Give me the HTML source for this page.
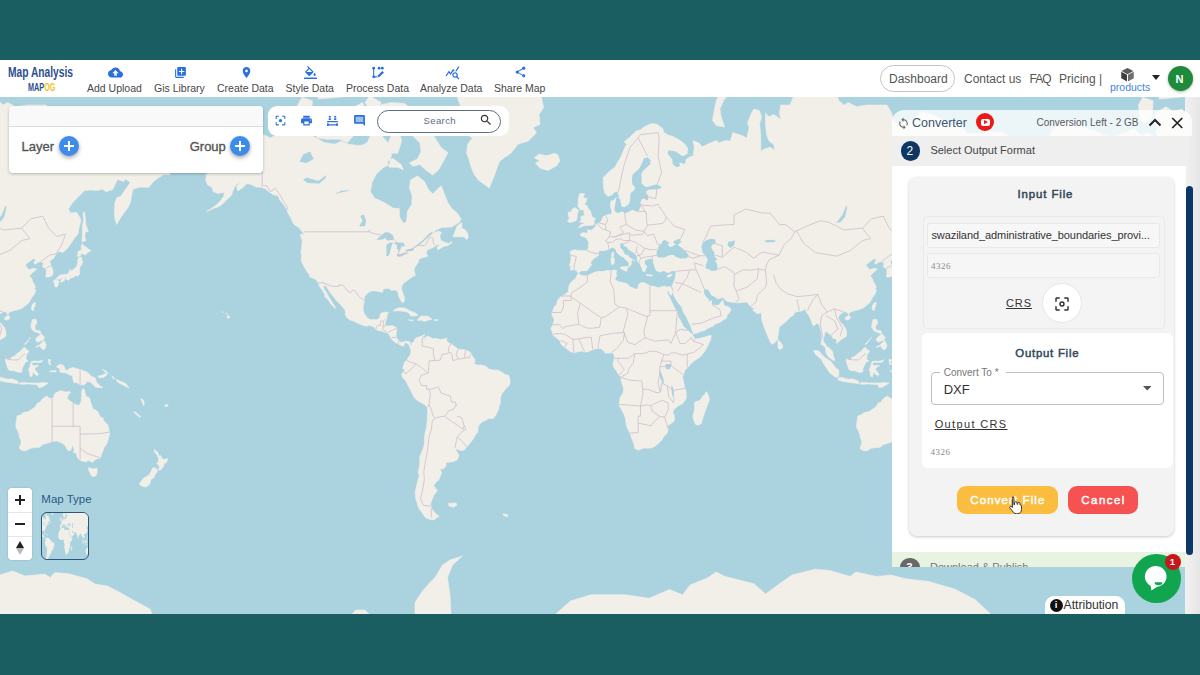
<!DOCTYPE html>
<html><head><meta charset="utf-8">
<style>
*{box-sizing:border-box;margin:0;padding:0}
html,body{width:1200px;height:675px;overflow:hidden;background:#1a5e62;font-family:"Liberation Sans",sans-serif}
.abs{position:absolute}
.t{position:absolute;white-space:nowrap;line-height:1}
#header{position:absolute;left:0;top:60px;width:1200px;height:37px;background:#fff}
.nav{color:#474747;font-size:10.5px}
.ico{position:absolute;fill:#2a6fdc}
#rstrip{position:absolute;left:1185px;top:97px;width:15px;height:517px;background:linear-gradient(90deg,#f1f1f1,#e6e6e6)}
#layer{position:absolute;left:9px;top:106px;width:254px;height:67px;background:#fff;border-radius:4px;box-shadow:0 1px 3px rgba(0,0,0,.25);overflow:hidden}
#layer .hd{position:absolute;left:0;top:0;width:254px;height:21px;background:#f9f9f9;border-bottom:1px solid #dcdcdc}
.plus{position:absolute;width:20px;height:20px;border-radius:50%;background:#3d8bea;box-shadow:0 2px 4px rgba(0,0,0,.35)}
.plus:before{content:"";position:absolute;left:5px;top:9px;width:10px;height:2px;background:#fff}
.plus:after{content:"";position:absolute;left:9px;top:5px;width:2px;height:10px;background:#fff}
#tools{position:absolute;left:268px;top:106px;width:241px;height:30px;background:#fff;border-radius:9px}
#search{position:absolute;left:377px;top:110px;width:124px;height:23px;border:1.3px solid #5b6f80;border-radius:12px;background:#fff}
#zoom{position:absolute;left:8px;top:488px;width:24px;height:72px;background:#fff;border-radius:4px;box-shadow:0 0 2px rgba(0,0,0,.2)}
#conv{position:absolute;left:892px;top:110px;width:300px;height:457px}
</style></head><body>
<svg width="1185" height="517" viewBox="0 97 1185 517" style="position:absolute;left:0;top:97px;display:block">
<rect x="0" y="97" width="1185" height="517" fill="#aad3df"/>
<path d="M199.2,158.5 203.8,154.5 213.2,155.6 213.7,150.9 209.0,148.5 202.0,142.4 207.4,137.9 212.0,129.8 220.2,124.9 225.3,122.0 235.4,124.9 241.2,127.7 250.6,129.8 262.2,133.9 270.4,137.9 276.2,135.2 283.2,133.2 289.1,130.5 293.8,129.1 300.8,135.2 306.6,132.6 315.9,137.9 324.1,142.4 334.6,144.2 341.6,141.1 348.6,144.2 358.0,145.5 362.6,144.9 367.3,142.4 370.8,134.6 372.0,120.6 375.5,113.0 379.0,131.2 383.7,137.9 388.3,143.0 391.8,133.9 400.0,133.9 401.6,141.1 397.7,153.3 391.8,153.3 389.5,164.6 383.7,167.3 376.7,173.5 372.0,182.4 370.4,191.8 375.0,198.5 380.2,200.6 386.0,203.6 393.0,208.1 399.3,208.6 399.5,216.9 403.5,223.4 406.5,221.5 407.5,211.0 411.7,204.8 412.2,196.3 409.4,188.1 410.5,180.0 417.5,176.1 424.5,181.5 428.5,189.5 432.7,194.0 438.5,188.1 441.3,185.8 444.4,194.0 447.9,202.7 451.4,208.1 457.9,213.8 461.2,219.6 458.4,223.0 451.4,227.1 442.0,227.4 436.2,230.0 429.2,235.3 425.7,239.1 432.7,233.5 438.5,231.1 441.6,232.5 439.7,236.0 440.9,240.5 445.5,242.5 449.0,243.5 451.4,241.5 451.9,242.8 447.9,245.5 443.2,246.8 437.8,250.0 436.9,247.1 440.9,244.5 436.2,245.1 433.9,247.1 430.4,248.7 427.3,250.0 426.2,253.2 428.0,255.8 426.9,256.7 423.8,257.3 419.9,258.6 418.7,259.8 418.5,262.2 416.4,264.9 415.2,266.7 414.0,270.3 415.0,273.5 415.2,275.5 412.9,276.6 409.8,278.6 407.0,280.8 403.5,283.3 401.9,285.8 401.4,289.1 403.3,294.2 404.7,298.4 404.2,301.5 402.8,302.8 401.6,301.8 400.0,298.9 398.4,295.8 398.1,292.6 395.8,290.2 394.2,289.9 391.8,290.7 389.5,288.8 386.0,288.3 383.0,289.4 382.5,292.3 380.2,292.1 377.8,291.2 372.5,290.7 369.7,291.8 366.1,294.4 364.3,297.1 364.5,300.7 363.3,305.6 363.1,310.2 364.5,313.7 367.1,317.7 370.1,319.4 373.2,319.7 377.8,319.4 379.7,317.5 380.4,313.7 382.5,312.5 388.3,312.0 387.2,315.0 386.5,319.4 385.3,321.9 384.8,325.5 387.2,326.0 393.0,325.8 397.0,328.0 396.3,332.8 396.0,336.4 397.0,338.7 400.5,342.3 403.5,342.1 405.8,341.1 408.9,341.6 410.8,343.0 412.2,343.2 414.0,341.3 415.2,338.7 416.8,337.6 419.9,336.8 422.9,335.4 425.0,334.2 423.8,336.8 424.5,339.2 425.7,340.4 425.0,337.6 428.0,336.1 429.2,336.6 432.2,338.5 436.2,338.5 440.9,339.5 445.5,338.5 447.2,338.3 446.2,339.9 449.0,343.2 451.4,343.9 453.7,345.8 456.1,347.5 458.4,349.4 463.1,349.6 465.9,350.1 470.1,352.2 471.7,354.1 472.4,356.4 474.7,359.2 475.0,362.2 473.6,363.6 478.2,365.3 480.6,364.8 486.4,366.4 488.7,369.0 493.4,369.9 498.1,370.2 501.6,372.0 505.1,374.6 508.6,375.3 509.8,378.6 510.2,382.1 509.3,385.2 506.5,388.1 504.4,390.4 501.6,394.0 500.4,397.6 500.4,402.5 499.3,406.1 498.1,410.6 495.8,415.1 493.4,418.4 488.7,418.6 485.2,420.6 482.2,421.9 479.4,424.5 478.0,427.6 478.0,432.1 475.4,435.0 473.1,439.1 470.1,442.9 466.8,447.1 464.2,450.2 460.7,450.5 457.2,449.3 454.9,448.8 457.7,453.0 459.1,455.4 457.2,459.8 453.7,461.6 447.9,462.5 446.0,461.9 446.0,466.1 443.2,469.2 439.7,468.5 442.0,472.9 440.9,474.2 439.0,479.7 436.2,482.0 433.6,485.7 437.4,490.8 433.9,495.0 432.0,499.7 430.4,504.2 431.8,507.2 431.5,508.7 433.9,511.8 439.2,516.6 436.2,517.8 434.3,519.9 430.4,519.5 425.7,517.8 422.2,513.0 418.7,508.0 415.7,498.6 415.2,491.5 416.4,486.3 418.0,479.7 419.2,475.8 418.2,471.7 419.4,467.0 419.9,461.0 419.6,457.1 421.7,452.2 423.4,447.9 424.3,444.6 424.5,437.7 425.0,432.9 426.2,428.9 426.9,423.7 427.3,418.6 427.6,412.3 427.3,407.4 424.5,404.4 419.9,402.0 415.9,399.6 413.3,395.9 411.2,391.6 408.2,385.7 405.8,381.0 402.6,377.4 401.6,374.2 404.0,371.3 404.7,369.2 402.6,368.5 403.5,365.3 404.7,362.0 407.0,360.4 408.2,357.6 410.5,354.5 411.0,350.5 409.8,346.5 408.4,344.2 405.8,342.5 404.2,343.9 403.7,346.3 401.2,345.4 398.8,344.2 396.3,343.2 393.0,340.4 391.1,338.7 389.5,335.2 387.2,332.8 384.8,332.3 381.3,331.1 377.8,330.4 375.5,328.9 373.2,326.8 369.7,325.3 366.1,326.3 361.5,324.8 358.0,323.3 354.5,321.6 349.8,319.9 346.8,317.5 345.1,314.7 345.6,312.0 344.7,309.2 343.0,307.7 340.5,304.4 338.1,302.3 336.0,300.5 334.6,297.9 332.5,295.5 330.0,292.6 328.1,289.1 326.4,286.4 323.4,285.0 323.9,288.6 326.4,292.6 328.6,296.6 331.1,300.5 333.0,303.6 334.2,305.4 335.8,307.4 334.9,308.4 333.9,306.9 331.1,304.4 329.5,301.8 327.6,299.2 324.6,296.6 324.8,294.4 322.5,290.4 319.9,287.2 319.0,284.7 317.8,282.5 316.4,280.0 314.8,278.9 312.4,277.8 309.9,277.2 309.2,274.6 306.8,271.4 305.4,268.8 304.3,267.0 302.4,263.4 301.2,260.4 301.5,255.8 300.8,252.6 301.7,247.1 302.2,241.5 300.3,234.2 304.3,234.2 300.8,230.0 298.4,227.1 294.9,225.2 292.6,222.6 291.4,218.8 287.9,213.0 286.7,209.0 283.7,204.8 279.7,199.7 277.9,195.4 273.9,194.9 270.4,193.1 265.7,189.0 261.1,187.2 256.4,187.2 251.7,184.8 247.1,183.4 242.4,188.1 237.7,190.9 236.5,186.3 241.2,181.5 235.4,185.3 233.0,190.4 231.4,195.4 227.2,199.3 223.0,203.6 219.0,206.5 214.4,208.1 209.7,210.2 206.7,211.4 212.0,208.1 216.7,204.8 220.7,200.6 223.7,196.3 224.2,192.7 221.4,192.7 217.9,193.6 213.2,191.8 212.0,187.2 207.4,184.8 205.7,180.0 206.2,175.0 208.5,171.5 215.5,169.9 216.0,165.1 212.0,164.6 206.2,164.6 202.7,162.9 199.2,158.5ZM1039.9,158.5 1044.5,154.5 1053.9,155.6 1054.3,150.9 1049.7,148.5 1042.7,142.4 1048.0,137.9 1052.7,129.8 1060.9,124.9 1066.0,122.0 1076.1,124.9 1081.9,127.7 1091.2,129.8 1102.9,133.9 1111.1,137.9 1116.9,135.2 1123.9,133.2 1129.8,130.5 1134.4,129.1 1141.5,135.2 1147.3,132.6 1156.6,137.9 1164.8,142.4 1175.3,144.2 1182.3,141.1 1189.3,144.2 1198.7,145.5 1203.3,144.9 1208.0,142.4 1211.5,134.6 1212.7,120.6 1216.2,113.0 1219.7,131.2 1224.4,137.9 1229.0,143.0 1232.5,133.9 1240.7,133.9 1242.3,141.1 1238.4,153.3 1232.5,153.3 1230.2,164.6 1224.4,167.3 1217.3,173.5 1212.7,182.4 1211.0,191.8 1215.7,198.5 1220.9,200.6 1226.7,203.6 1233.7,208.1 1240.0,208.6 1240.2,216.9 1244.2,223.4 1247.2,221.5 1248.2,211.0 1252.4,204.8 1252.8,196.3 1250.0,188.1 1251.2,180.0 1258.2,176.1 1265.2,181.5 1269.2,189.5 1273.4,194.0 1279.2,188.1 1282.0,185.8 1285.1,194.0 1288.6,202.7 1292.1,208.1 1298.6,213.8 1301.9,219.6 1299.1,223.0 1292.1,227.1 1282.7,227.4 1276.9,230.0 1269.9,235.3 1266.4,239.1 1273.4,233.5 1279.2,231.1 1282.3,232.5 1280.4,236.0 1281.6,240.5 1286.2,242.5 1289.7,243.5 1292.1,241.5 1292.5,242.8 1288.6,245.5 1283.9,246.8 1278.5,250.0 1277.6,247.1 1281.6,244.5 1276.9,245.1 1274.6,247.1 1271.1,248.7 1268.0,250.0 1266.9,253.2 1268.7,255.8 1267.6,256.7 1264.5,257.3 1260.5,258.6 1259.4,259.8 1259.1,262.2 1257.0,264.9 1255.9,266.7 1254.7,270.3 1255.6,273.5 1255.9,275.5 1253.5,276.6 1250.5,278.6 1247.7,280.8 1244.2,283.3 1242.6,285.8 1242.1,289.1 1244.0,294.2 1245.4,298.4 1244.9,301.5 1243.5,302.8 1242.3,301.8 1240.7,298.9 1239.1,295.8 1238.8,292.6 1236.5,290.2 1234.9,289.9 1232.5,290.7 1230.2,288.8 1226.7,288.3 1223.7,289.4 1223.2,292.3 1220.9,292.1 1218.5,291.2 1213.1,290.7 1210.3,291.8 1206.8,294.4 1205.0,297.1 1205.2,300.7 1204.0,305.6 1203.8,310.2 1205.2,313.7 1207.8,317.7 1210.8,319.4 1213.8,319.7 1218.5,319.4 1220.4,317.5 1221.1,313.7 1223.2,312.5 1229.0,312.0 1227.9,315.0 1227.2,319.4 1226.0,321.9 1225.5,325.5 1227.9,326.0 1233.7,325.8 1237.7,328.0 1237.0,332.8 1236.7,336.4 1237.7,338.7 1241.2,342.3 1244.2,342.1 1246.5,341.1 1249.6,341.6 1251.4,343.0 1252.8,343.2 1254.7,341.3 1255.9,338.7 1257.5,337.6 1260.5,336.8 1263.6,335.4 1265.7,334.2 1264.5,336.8 1265.2,339.2 1266.4,340.4 1265.7,337.6 1268.7,336.1 1269.9,336.6 1272.9,338.5 1276.9,338.5 1281.6,339.5 1286.2,338.5 1287.9,338.3 1286.9,339.9 1289.7,343.2 1292.1,343.9 1294.4,345.8 1296.7,347.5 1299.1,349.4 1303.8,349.6 1306.6,350.1 1310.8,352.2 1312.4,354.1 1313.1,356.4 1315.4,359.2 1315.7,362.2 1314.3,363.6 1318.9,365.3 1321.3,364.8 1327.1,366.4 1329.4,369.0 1334.1,369.9 1338.8,370.2 1342.3,372.0 1345.8,374.6 1349.3,375.3 1350.5,378.6 1350.9,382.1 1350.0,385.2 1347.2,388.1 1345.1,390.4 1342.3,394.0 1341.1,397.6 1341.1,402.5 1339.9,406.1 1338.8,410.6 1336.4,415.1 1334.1,418.4 1329.4,418.6 1325.9,420.6 1322.9,421.9 1320.1,424.5 1318.7,427.6 1318.7,432.1 1316.1,435.0 1313.8,439.1 1310.8,442.9 1307.5,447.1 1304.9,450.2 1301.4,450.5 1297.9,449.3 1295.6,448.8 1298.4,453.0 1299.8,455.4 1297.9,459.8 1294.4,461.6 1288.6,462.5 1286.7,461.9 1286.7,466.1 1283.9,469.2 1280.4,468.5 1282.7,472.9 1281.6,474.2 1279.7,479.7 1276.9,482.0 1274.3,485.7 1278.1,490.8 1274.6,495.0 1272.7,499.7 1271.1,504.2 1272.5,507.2 1272.2,508.7 1274.6,511.8 1279.9,516.6 1276.9,517.8 1275.0,519.9 1271.1,519.5 1266.4,517.8 1262.9,513.0 1259.4,508.0 1256.3,498.6 1255.9,491.5 1257.0,486.3 1258.7,479.7 1259.8,475.8 1258.9,471.7 1260.1,467.0 1260.5,461.0 1260.3,457.1 1262.4,452.2 1264.1,447.9 1265.0,444.6 1265.2,437.7 1265.7,432.9 1266.9,428.9 1267.6,423.7 1268.0,418.6 1268.3,412.3 1268.0,407.4 1265.2,404.4 1260.5,402.0 1256.6,399.6 1254.0,395.9 1251.9,391.6 1248.9,385.7 1246.5,381.0 1243.3,377.4 1242.3,374.2 1244.7,371.3 1245.4,369.2 1243.3,368.5 1244.2,365.3 1245.4,362.0 1247.7,360.4 1248.9,357.6 1251.2,354.5 1251.7,350.5 1250.5,346.5 1249.1,344.2 1246.5,342.5 1244.9,343.9 1244.4,346.3 1241.9,345.4 1239.5,344.2 1237.0,343.2 1233.7,340.4 1231.8,338.7 1230.2,335.2 1227.9,332.8 1225.5,332.3 1222.0,331.1 1218.5,330.4 1216.2,328.9 1213.8,326.8 1210.3,325.3 1206.8,326.3 1202.2,324.8 1198.7,323.3 1195.2,321.6 1190.5,319.9 1187.5,317.5 1185.8,314.7 1186.3,312.0 1185.4,309.2 1183.7,307.7 1181.2,304.4 1178.8,302.3 1176.7,300.5 1175.3,297.9 1173.2,295.5 1170.6,292.6 1168.8,289.1 1167.1,286.4 1164.1,285.0 1164.6,288.6 1167.1,292.6 1169.2,296.6 1171.8,300.5 1173.7,303.6 1174.8,305.4 1176.5,307.4 1175.5,308.4 1174.6,306.9 1171.8,304.4 1170.2,301.8 1168.3,299.2 1165.3,296.6 1165.5,294.4 1163.2,290.4 1160.6,287.2 1159.7,284.7 1158.5,282.5 1157.1,280.0 1155.5,278.9 1153.1,277.8 1150.6,277.2 1149.9,274.6 1147.5,271.4 1146.1,268.8 1145.0,267.0 1143.1,263.4 1141.9,260.4 1142.2,255.8 1141.5,252.6 1142.4,247.1 1142.9,241.5 1141.0,234.2 1145.0,234.2 1141.5,230.0 1139.1,227.1 1135.6,225.2 1133.3,222.6 1132.1,218.8 1128.6,213.0 1127.4,209.0 1124.4,204.8 1120.4,199.7 1118.6,195.4 1114.6,194.9 1111.1,193.1 1106.4,189.0 1101.8,187.2 1097.1,187.2 1092.4,184.8 1087.7,183.4 1083.1,188.1 1078.4,190.9 1077.2,186.3 1081.9,181.5 1076.1,185.3 1073.7,190.4 1072.1,195.4 1067.9,199.3 1063.7,203.6 1059.7,206.5 1055.0,208.1 1050.4,210.2 1047.3,211.4 1052.7,208.1 1057.4,204.8 1061.4,200.6 1064.4,196.3 1064.9,192.7 1062.1,192.7 1058.6,193.6 1053.9,191.8 1052.7,187.2 1048.0,184.8 1046.4,180.0 1046.9,175.0 1049.2,171.5 1056.2,169.9 1056.7,165.1 1052.7,164.6 1046.9,164.6 1043.4,162.9 1039.9,158.5ZM489.2,188.1 482.9,183.4 478.2,180.0 473.6,173.5 470.8,166.2 468.9,159.0 466.6,153.3 467.7,144.2 472.4,137.9 464.2,132.6 468.9,125.6 461.9,120.6 463.1,110.7 458.4,100.8 454.9,87.5 451.4,72.8 521.4,-31.1 556.5,23.3 549.5,72.8 546.0,87.5 541.3,96.5 543.6,107.5 539.0,114.6 540.1,124.2 533.1,127.7 536.6,132.6 528.4,141.1 517.9,144.2 510.9,153.3 503.9,157.9 499.3,161.8 496.9,168.3 494.6,175.0 491.6,182.4 489.2,188.1ZM447.9,152.7 443.2,161.8 438.5,169.9 432.7,175.0 425.7,169.9 419.9,164.6 412.9,166.2 409.4,162.9 417.5,159.0 421.0,151.5 419.9,143.0 412.9,135.9 407.0,131.2 396.5,131.2 389.5,129.8 382.5,120.6 380.2,105.0 390.7,102.5 404.7,103.4 412.9,110.7 423.4,120.6 431.5,129.8 435.0,137.9 440.9,147.3 447.9,152.7ZM317.1,137.9 326.4,139.2 339.3,139.2 347.5,142.4 354.5,134.6 355.6,127.7 347.5,122.0 341.6,109.1 332.3,111.5 325.3,106.7 314.8,113.0 313.6,122.8 317.1,127.7 314.8,132.6 317.1,137.9ZM1157.8,137.9 1167.1,139.2 1180.0,139.2 1188.2,142.4 1195.2,134.6 1196.3,127.7 1188.2,122.0 1182.3,109.1 1173.0,111.5 1166.0,106.7 1155.5,113.0 1154.3,122.8 1157.8,127.7 1155.5,132.6 1157.8,137.9ZM299.6,120.6 304.3,122.8 311.3,118.3 312.4,100.8 301.9,97.4 297.7,105.0 299.6,120.6ZM1140.3,120.6 1145.0,122.8 1152.0,118.3 1153.1,100.8 1142.6,97.4 1138.4,105.0 1140.3,120.6ZM365.0,102.5 374.3,116.8 381.3,102.5 369.7,95.7 365.0,102.5ZM354.5,118.3 363.8,120.6 366.1,110.7 362.6,102.5 354.5,106.7 354.5,118.3ZM1195.2,118.3 1204.5,120.6 1206.8,110.7 1203.3,102.5 1195.2,106.7 1195.2,118.3ZM376.7,96.5 404.7,96.5 404.7,82.8 376.7,82.8ZM318.3,99.1 346.3,96.5 346.3,82.8 318.3,82.8ZM1159.0,99.1 1187.0,96.5 1187.0,82.8 1159.0,82.8ZM389.5,167.3 397.7,167.3 403.5,169.9 401.2,164.6 393.0,158.5 387.2,161.8 389.5,167.3ZM453.0,236.7 454.9,231.8 457.2,226.0 461.7,222.3 461.9,228.2 465.4,230.0 467.7,233.5 468.4,237.0 466.6,239.8 464.2,237.0 460.7,236.7 453.0,236.7ZM393.0,311.0 396.5,308.4 400.0,307.7 404.7,307.9 410.5,311.0 415.2,313.0 418.2,315.2 415.2,316.0 410.5,316.0 409.8,314.0 407.0,312.0 402.3,311.2 398.8,310.7 395.3,311.0 393.0,311.0ZM417.5,319.7 421.0,316.0 428.0,316.2 432.0,319.2 428.0,320.2 424.5,321.6 421.5,320.2 417.8,320.4 417.5,319.7ZM408.4,319.7 413.6,320.2 412.2,321.1 409.4,320.4ZM434.6,319.4 438.3,319.7 437.8,320.7 434.6,320.7ZM540.1,168.3 535.5,162.9 540.1,160.7 534.3,157.9 539.0,153.9 544.8,155.6 549.5,155.1 554.1,153.3 557.6,154.5 560.0,160.7 556.5,165.7 548.3,170.4 540.1,168.3ZM-223.0,191.3 -225.8,191.8 -229.3,195.4 -232.8,196.3 -236.1,192.7 -237.0,188.1 -237.5,182.4 -237.5,177.6 -234.0,174.0 -230.5,170.4 -225.8,167.3 -223.5,162.9 -220.0,157.3 -217.7,151.5 -214.2,144.2 -216.5,141.7 -211.8,137.9 -208.3,134.6 -204.8,131.2 -200.1,129.8 -195.5,126.3 -188.9,123.5 -183.8,124.2 -178.0,128.4 -176.8,132.6 -172.1,135.2 -167.5,136.6 -161.6,139.8 -155.8,144.2 -153.0,148.5 -153.4,153.9 -147.6,155.1 -146.4,147.3 -147.6,140.5 -141.8,143.0 -138.3,146.7 -134.8,144.9 -124.3,140.5 -121.9,143.0 -114.9,140.5 -110.2,141.1 -107.9,132.6 -99.7,135.2 -93.9,137.9 -91.6,127.7 -93.2,122.8 -89.2,113.0 -86.9,109.1 -81.1,110.7 -79.2,116.8 -81.1,124.2 -79.9,134.6 -79.9,151.5 -76.4,149.1 -70.5,147.3 -65.9,150.3 -67.0,144.2 -71.7,141.1 -74.0,134.6 -75.2,124.2 -75.2,113.0 -71.7,116.8 -67.0,114.6 -63.5,116.8 -60.0,119.8 -61.2,113.0 -60.0,105.0 -50.7,105.0 -47.2,96.5 -43.7,92.1 -27.3,82.8 -15.7,77.9 -6.3,65.3 -1.7,77.9 -5.2,92.1 -1.7,100.8 3.0,105.0 7.7,102.5 12.4,105.0 15.9,106.7 26.4,105.0 38.0,105.0 46.2,105.0 50.9,113.0 53.2,120.6 57.9,125.6 63.7,120.6 71.9,120.6 76.6,115.3 80.1,111.5 91.8,114.6 101.1,119.8 106.9,124.9 112.8,124.2 119.8,125.6 124.4,131.2 128.0,133.9 133.8,133.2 142.0,133.9 147.8,130.5 153.6,131.9 161.8,132.6 171.2,137.9 179.3,141.1 185.2,147.3 191.0,153.3 195.2,155.6 191.0,159.0 188.7,162.9 186.3,165.7 178.2,164.0 173.5,161.8 168.8,164.6 165.3,163.5 167.7,169.9 170.0,175.0 164.1,174.5 157.1,178.5 152.5,182.4 149.0,187.2 140.8,187.2 136.1,188.1 132.6,189.5 131.5,196.3 130.3,202.7 128.4,206.9 124.4,212.2 120.9,217.3 116.7,224.5 114.9,218.8 114.4,211.0 114.9,202.7 117.0,197.6 120.9,196.3 124.4,190.9 128.0,185.8 130.3,182.4 125.6,179.0 123.3,181.5 117.4,179.5 112.8,189.5 105.8,191.8 102.3,189.0 97.6,190.4 90.6,190.0 84.8,190.4 81.2,194.0 76.6,198.5 71.9,203.6 68.4,209.0 70.7,213.0 76.6,212.2 78.9,215.7 81.0,220.0 78.9,228.2 78.2,233.5 74.2,238.7 70.7,243.8 67.2,248.7 62.6,252.6 59.1,251.3 56.3,253.6 53.7,258.3 49.7,261.3 50.9,265.8 53.0,270.3 53.0,274.6 51.6,276.1 48.6,276.9 45.8,277.2 46.2,273.2 46.2,269.7 45.5,267.9 42.7,267.3 43.2,263.1 41.1,261.6 38.0,262.2 35.0,264.3 33.8,262.8 35.7,259.8 33.4,258.6 29.9,261.3 26.4,263.7 25.4,265.5 27.5,267.9 29.2,269.7 32.9,268.2 36.9,269.1 34.5,270.9 32.2,272.9 29.4,276.1 31.5,278.0 32.9,282.2 34.5,284.5 35.5,287.2 34.5,288.3 35.7,290.4 34.5,293.9 32.2,297.1 30.6,299.7 29.4,302.3 26.8,304.4 24.0,306.7 21.7,308.4 18.9,309.2 17.5,310.0 15.4,310.2 12.4,311.2 10.0,312.0 8.4,313.2 8.2,315.0 7.0,313.2 5.4,311.7 3.0,312.0 0.2,313.7 -1.7,315.7 -2.4,318.7 -0.5,321.9 1.8,324.3 4.2,327.2 5.8,330.9 6.1,335.2 4.9,337.1 1.8,338.7 -0.5,340.4 -3.3,342.8 -4.5,343.2 -4.0,340.2 -5.2,338.7 -7.5,338.5 -9.6,335.2 -12.2,333.5 -13.6,331.8 -15.7,331.8 -15.9,334.0 -17.3,338.7 -17.5,341.8 -15.0,343.9 -14.5,346.5 -12.2,347.2 -9.8,349.4 -7.7,352.2 -7.7,355.2 -6.6,357.6 -5.9,360.1 -7.5,360.4 -9.4,359.0 -12.6,356.6 -14.0,354.3 -15.0,351.2 -15.2,348.2 -18.0,344.9 -19.6,344.2 -18.9,340.4 -18.9,336.4 -19.4,332.8 -21.0,326.8 -21.7,324.3 -24.5,323.6 -26.6,326.0 -28.3,324.8 -29.2,321.1 -30.8,317.5 -32.5,314.5 -34.3,312.0 -35.5,308.7 -37.9,310.7 -40.2,311.2 -42.5,311.5 -46.0,312.5 -47.2,315.2 -50.7,317.2 -53.0,319.9 -56.5,323.1 -58.9,325.1 -61.7,327.2 -61.9,331.6 -62.8,336.4 -62.8,339.2 -64.7,341.6 -66.6,342.8 -68.2,344.4 -70.3,342.5 -71.7,338.7 -73.3,335.2 -75.2,330.4 -76.8,326.5 -78.2,321.9 -79.2,318.2 -79.2,314.5 -79.7,312.0 -80.6,313.2 -83.4,313.7 -85.7,312.0 -88.1,310.0 -85.3,308.7 -88.5,307.7 -89.9,306.4 -92.0,304.4 -93.9,302.0 -98.6,302.6 -104.4,302.8 -110.2,302.0 -114.9,301.0 -116.1,298.4 -117.9,297.4 -117.7,299.7 -117.2,304.4 -114.9,306.2 -111.9,306.9 -109.5,309.5 -111.4,313.2 -113.3,314.7 -114.2,318.2 -117.2,319.9 -120.8,322.4 -125.4,324.1 -127.8,326.3 -132.4,328.0 -135.9,330.4 -140.6,331.8 -144.1,333.3 -147.6,333.7 -148.1,335.6 -145.3,339.0 -140.6,338.3 -135.9,337.1 -131.3,335.6 -129.4,335.6 -129.9,338.7 -130.6,341.1 -132.4,344.7 -134.8,349.4 -137.1,352.9 -140.6,356.9 -143.4,358.7 -147.6,361.8 -151.1,365.3 -153.4,368.1 -155.8,370.4 -156.9,373.9 -158.3,377.4 -157.4,379.8 -156.9,383.3 -155.8,387.3 -154.6,391.6 -154.4,397.6 -155.3,400.0 -158.1,403.7 -162.8,406.1 -167.0,409.8 -167.9,412.3 -166.3,416.1 -166.3,420.6 -168.6,423.0 -172.1,425.0 -173.1,426.3 -172.6,430.2 -173.8,433.4 -176.8,436.6 -179.1,440.4 -182.6,443.7 -186.1,446.5 -189.4,447.9 -193.1,448.2 -196.6,447.9 -202.5,450.2 -205.3,448.8 -206.2,448.5 -206.5,445.1 -207.6,442.3 -209.0,438.2 -210.7,433.1 -213.0,428.9 -214.2,426.3 -215.3,418.6 -216.5,414.8 -218.4,411.1 -221.2,406.1 -221.6,403.7 -220.7,397.6 -217.7,392.8 -217.0,389.2 -218.4,384.5 -220.0,378.6 -220.7,376.3 -222.3,373.9 -224.7,370.4 -227.5,366.9 -227.5,363.4 -227.0,360.6 -226.3,357.6 -226.8,354.5 -228.4,352.9 -230.5,352.9 -232.8,353.1 -235.2,353.3 -237.5,350.5 -239.4,348.7 -242.2,348.4 -245.7,348.9 -249.2,350.3 -252.7,351.7 -255.0,352.2 -258.5,351.2 -262.0,351.5 -266.7,353.1 -270.2,351.7 -273.7,349.1 -276.0,347.2 -278.4,345.8 -280.0,343.5 -280.7,341.1 -283.1,338.7 -284.7,337.6 -287.3,335.6 -288.2,334.0 -288.4,331.6 -290.1,328.7 -288.9,326.8 -287.7,324.8 -287.0,321.9 -286.6,319.4 -287.7,317.0 -289.1,313.7 -287.7,310.7 -286.6,306.9 -284.2,304.4 -283.1,300.2 -280.0,296.6 -276.0,294.7 -272.5,292.1 -272.1,288.6 -271.6,285.8 -270.2,283.1 -267.9,280.6 -265.1,278.6 -263.7,275.2 -262.7,273.8 -262.3,273.2 -263.9,271.4 -264.4,270.6 -266.5,269.7 -269.0,270.0 -270.2,270.3 -269.7,266.7 -271.4,265.2 -270.2,262.8 -269.7,259.8 -269.7,256.7 -270.0,253.6 -270.9,252.0 -268.6,250.4 -266.7,249.7 -262.0,250.4 -257.4,250.4 -253.4,250.7 -252.2,247.1 -252.0,242.8 -253.9,238.7 -256.2,237.0 -259.7,236.0 -260.4,233.9 -257.4,232.5 -253.9,233.2 -252.7,232.8 -253.4,229.3 -251.5,230.3 -248.7,230.0 -246.9,228.2 -245.5,226.7 -244.8,224.5 -242.2,223.4 -240.3,222.3 -238.7,219.6 -238.0,217.3 -236.3,215.7 -232.8,214.6 -230.5,214.6 -229.1,213.4 -228.9,211.0 -229.8,208.1 -230.3,206.9 -230.0,202.7 -229.8,201.0 -227.0,200.2 -224.4,197.6 -221.4,197.6 -223.0,191.3ZM617.7,191.3 614.9,191.8 611.3,195.4 607.8,196.3 604.6,192.7 603.6,188.1 603.2,182.4 603.2,177.6 606.7,174.0 610.2,170.4 614.9,167.3 617.2,162.9 620.7,157.3 623.0,151.5 626.5,144.2 624.2,141.7 628.9,137.9 632.4,134.6 635.9,131.2 640.5,129.8 645.2,126.3 651.7,123.5 656.9,124.2 662.7,128.4 663.9,132.6 668.6,135.2 673.2,136.6 679.1,139.8 684.9,144.2 687.7,148.5 687.2,153.9 693.1,155.1 694.3,147.3 693.1,140.5 698.9,143.0 702.4,146.7 705.9,144.9 716.4,140.5 718.8,143.0 725.8,140.5 730.4,141.1 732.8,132.6 741.0,135.2 746.8,137.9 749.1,127.7 747.5,122.8 751.5,113.0 753.8,109.1 759.6,110.7 761.5,116.8 759.6,124.2 760.8,134.6 760.8,151.5 764.3,149.1 770.1,147.3 774.8,150.3 773.6,144.2 769.0,141.1 766.6,134.6 765.5,124.2 765.5,113.0 769.0,116.8 773.6,114.6 777.2,116.8 780.7,119.8 779.5,113.0 780.7,105.0 790.0,105.0 793.5,96.5 797.0,92.1 813.3,82.8 825.0,77.9 834.4,65.3 839.0,77.9 835.5,92.1 839.0,100.8 843.7,105.0 848.4,102.5 853.0,105.0 856.6,106.7 867.1,105.0 878.7,105.0 886.9,105.0 891.6,113.0 893.9,120.6 898.6,125.6 904.4,120.6 912.6,120.6 917.3,115.3 920.8,111.5 932.4,114.6 941.8,119.8 947.6,124.9 953.5,124.2 960.5,125.6 965.1,131.2 968.6,133.9 974.5,133.2 982.7,133.9 988.5,130.5 994.3,131.9 1002.5,132.6 1011.8,137.9 1020.0,141.1 1025.9,147.3 1031.7,153.3 1035.9,155.6 1031.7,159.0 1029.4,162.9 1027.0,165.7 1018.9,164.0 1014.2,161.8 1009.5,164.6 1006.0,163.5 1008.3,169.9 1010.7,175.0 1004.8,174.5 997.8,178.5 993.2,182.4 989.7,187.2 981.5,187.2 976.8,188.1 973.3,189.5 972.1,196.3 971.0,202.7 969.1,206.9 965.1,212.2 961.6,217.3 957.4,224.5 955.6,218.8 955.1,211.0 955.6,202.7 957.7,197.6 961.6,196.3 965.1,190.9 968.6,185.8 971.0,182.4 966.3,179.0 964.0,181.5 958.1,179.5 953.5,189.5 946.5,191.8 943.0,189.0 938.3,190.4 931.3,190.0 925.4,190.4 921.9,194.0 917.3,198.5 912.6,203.6 909.1,209.0 911.4,213.0 917.3,212.2 919.6,215.7 921.7,220.0 919.6,228.2 918.9,233.5 914.9,238.7 911.4,243.8 907.9,248.7 903.3,252.6 899.8,251.3 897.0,253.6 894.4,258.3 890.4,261.3 891.6,265.8 893.7,270.3 893.7,274.6 892.3,276.1 889.2,276.9 886.4,277.2 886.9,273.2 886.9,269.7 886.2,267.9 883.4,267.3 883.9,263.1 881.8,261.6 878.7,262.2 875.7,264.3 874.5,262.8 876.4,259.8 874.1,258.6 870.6,261.3 867.1,263.7 866.1,265.5 868.2,267.9 869.9,269.7 873.6,268.2 877.6,269.1 875.2,270.9 872.9,272.9 870.1,276.1 872.2,278.0 873.6,282.2 875.2,284.5 876.2,287.2 875.2,288.3 876.4,290.4 875.2,293.9 872.9,297.1 871.3,299.7 870.1,302.3 867.5,304.4 864.7,306.7 862.4,308.4 859.6,309.2 858.2,310.0 856.1,310.2 853.0,311.2 850.7,312.0 849.1,313.2 848.8,315.0 847.7,313.2 846.0,311.7 843.7,312.0 840.9,313.7 839.0,315.7 838.3,318.7 840.2,321.9 842.5,324.3 844.9,327.2 846.5,330.9 846.7,335.2 845.6,337.1 842.5,338.7 840.2,340.4 837.4,342.8 836.2,343.2 836.7,340.2 835.5,338.7 833.2,338.5 831.1,335.2 828.5,333.5 827.1,331.8 825.0,331.8 824.8,334.0 823.4,338.7 823.2,341.8 825.7,343.9 826.2,346.5 828.5,347.2 830.9,349.4 833.0,352.2 833.0,355.2 834.1,357.6 834.8,360.1 833.2,360.4 831.3,359.0 828.1,356.6 826.7,354.3 825.7,351.2 825.5,348.2 822.7,344.9 821.1,344.2 821.8,340.4 821.8,336.4 821.3,332.8 819.7,326.8 819.0,324.3 816.2,323.6 814.0,326.0 812.4,324.8 811.5,321.1 809.8,317.5 808.2,314.5 806.3,312.0 805.2,308.7 802.8,310.7 800.5,311.2 798.2,311.5 794.7,312.5 793.5,315.2 790.0,317.2 787.7,319.9 784.2,323.1 781.8,325.1 779.0,327.2 778.8,331.6 777.9,336.4 777.9,339.2 776.0,341.6 774.1,342.8 772.5,344.4 770.4,342.5 769.0,338.7 767.3,335.2 765.5,330.4 763.8,326.5 762.4,321.9 761.5,318.2 761.5,314.5 761.0,312.0 760.1,313.2 757.3,313.7 755.0,312.0 752.6,310.0 755.4,308.7 752.2,307.7 750.8,306.4 748.7,304.4 746.8,302.0 742.1,302.6 736.3,302.8 730.4,302.0 725.8,301.0 724.6,298.4 722.7,297.4 723.0,299.7 723.4,304.4 725.8,306.2 728.8,306.9 731.1,309.5 729.3,313.2 727.4,314.7 726.5,318.2 723.4,319.9 719.9,322.4 715.3,324.1 712.9,326.3 708.3,328.0 704.8,330.4 700.1,331.8 696.6,333.3 693.1,333.7 692.6,335.6 695.4,339.0 700.1,338.3 704.8,337.1 709.4,335.6 711.3,335.6 710.8,338.7 710.1,341.1 708.3,344.7 705.9,349.4 703.6,352.9 700.1,356.9 697.3,358.7 693.1,361.8 689.6,365.3 687.2,368.1 684.9,370.4 683.7,373.9 682.3,377.4 683.3,379.8 683.7,383.3 684.9,387.3 686.1,391.6 686.3,397.6 685.4,400.0 682.6,403.7 677.9,406.1 673.7,409.8 672.8,412.3 674.4,416.1 674.4,420.6 672.1,423.0 668.6,425.0 667.6,426.3 668.1,430.2 666.9,433.4 663.9,436.6 661.6,440.4 658.1,443.7 654.6,446.5 651.3,447.9 647.5,448.2 644.0,447.9 638.2,450.2 635.4,448.8 634.5,448.5 634.2,445.1 633.1,442.3 631.7,438.2 630.0,433.1 627.7,428.9 626.5,426.3 625.4,418.6 624.2,414.8 622.3,411.1 619.5,406.1 619.1,403.7 620.0,397.6 623.0,392.8 623.7,389.2 622.3,384.5 620.7,378.6 620.0,376.3 618.4,373.9 616.0,370.4 613.2,366.9 613.2,363.4 613.7,360.6 614.4,357.6 613.9,354.5 612.3,352.9 610.2,352.9 607.8,353.1 605.5,353.3 603.2,350.5 601.3,348.7 598.5,348.4 595.0,348.9 591.5,350.3 588.0,351.7 585.7,352.2 582.2,351.2 578.7,351.5 574.0,353.1 570.5,351.7 567.0,349.1 564.6,347.2 562.3,345.8 560.7,343.5 560.0,341.1 557.6,338.7 556.0,337.6 553.4,335.6 552.5,334.0 552.3,331.6 550.6,328.7 551.8,326.8 553.0,324.8 553.7,321.9 554.1,319.4 553.0,317.0 551.6,313.7 553.0,310.7 554.1,306.9 556.5,304.4 557.6,300.2 560.7,296.6 564.6,294.7 568.1,292.1 568.6,288.6 569.1,285.8 570.5,283.1 572.8,280.6 575.6,278.6 577.0,275.2 578.0,273.8 578.4,273.2 576.8,271.4 576.3,270.6 574.2,269.7 571.7,270.0 570.5,270.3 570.9,266.7 569.3,265.2 570.5,262.8 570.9,259.8 570.9,256.7 570.7,253.6 569.8,252.0 572.1,250.4 574.0,249.7 578.7,250.4 583.3,250.4 587.3,250.7 588.5,247.1 588.7,242.8 586.8,238.7 584.5,237.0 581.0,236.0 580.3,233.9 583.3,232.5 586.8,233.2 588.0,232.8 587.3,229.3 589.2,230.3 592.0,230.0 593.8,228.2 595.2,226.7 595.9,224.5 598.5,223.4 600.4,222.3 602.0,219.6 602.7,217.3 604.3,215.7 607.8,214.6 610.2,214.6 611.6,213.4 611.8,211.0 610.9,208.1 610.4,206.9 610.6,202.7 610.9,201.0 613.7,200.2 616.3,197.6 619.3,197.6 617.7,191.3ZM712.5,120.6 716.4,125.6 724.6,127.0 721.1,116.8 719.9,109.1 723.4,100.8 730.4,92.1 745.6,72.8 731.6,72.8 721.1,87.5 716.4,100.8 714.1,110.7ZM619.5,62.0 638.2,77.9 654.6,62.0 642.9,23.3 619.5,37.4ZM0.0,614.0 0.0,575.0 12.5,571.0 25.0,576.0 45.0,574.0 50.0,577.5 55.0,572.5 70.0,574.0 87.5,579.0 95.0,584.0 107.5,586.0 120.0,592.5 135.0,601.0 150.0,609.0 152.0,614.0ZM415.0,614.0 415.0,602.5 422.5,591.0 430.0,582.5 435.0,577.5 442.5,565.0 450.0,560.0 462.5,556.0 452.5,565.0 447.5,577.5 450.0,595.0 451.0,614.0ZM352.0,614.0 356.0,610.0 365.0,610.0 369.0,614.0ZM555.8,614.0 570.4,601.0 590.8,594.8 625.8,594.8 649.0,598.3 669.5,589.6 682.7,594.8 690.0,585.0 707.4,577.9 716.2,572.0 725.0,576.4 754.0,583.7 765.7,594.0 777.4,585.2 792.0,575.0 815.3,569.2 830.0,570.6 850.3,576.4 856.0,572.0 876.5,576.4 891.0,575.0 905.5,578.8 928.7,581.4 954.6,589.0 975.0,599.5 990.7,614.0Z" fill="#f2efe9" stroke="#f2efe9" stroke-width="0.6" stroke-linejoin="round"/>
<path d="M578.4,273.2 581.2,271.2 585.7,270.9 586.8,271.2 589.2,268.5 590.8,266.1 592.0,264.9 590.8,262.8 593.6,259.2 596.6,257.0 599.0,255.4 598.7,251.6 602.0,250.7 604.1,251.0 608.5,249.7 612.3,247.4 615.3,249.1 616.3,252.3 620.2,256.1 623.5,257.6 624.9,258.9 626.5,260.7 628.2,261.9 628.9,264.3 627.9,267.3 629.1,267.3 630.3,266.1 631.7,264.3 631.7,260.1 633.5,260.7 634.7,261.9 634.7,260.4 632.4,258.9 631.0,257.9 628.9,257.0 628.9,255.4 626.5,255.1 624.2,253.2 623.0,250.0 620.5,248.1 620.2,244.1 621.9,243.1 623.7,243.5 623.3,245.1 624.0,246.1 626.5,247.1 628.4,249.4 629.8,250.4 632.4,252.0 633.8,253.2 635.9,255.1 637.0,256.7 636.8,258.9 636.8,260.4 638.2,262.2 639.6,263.7 640.8,266.4 641.9,268.8 642.2,270.9 644.0,272.0 645.2,271.7 645.7,269.4 646.8,267.6 647.5,266.7 645.2,264.3 644.7,261.9 645.0,259.5 647.1,260.7 647.5,259.2 651.0,258.6 652.7,259.5 653.4,260.7 652.7,262.8 654.1,264.3 654.1,266.1 655.3,268.8 655.5,270.3 656.9,271.2 658.1,271.4 660.4,272.6 663.2,270.9 665.1,271.4 667.4,272.9 669.7,272.6 672.1,270.9 676.0,271.4 675.1,274.6 675.3,276.6 674.4,279.2 673.2,282.2 672.1,285.8 671.6,286.4 666.9,286.4 663.9,285.8 661.3,286.6 658.1,287.5 654.6,286.1 650.3,285.6 647.5,284.2 645.2,282.8 641.7,282.0 638.4,284.2 637.5,288.3 635.9,289.1 633.5,287.7 630.0,286.6 627.0,283.3 622.3,282.0 618.4,281.4 615.1,279.2 617.2,275.5 616.3,273.2 617.2,270.0 615.6,270.3 614.6,269.4 611.3,270.6 606.7,270.0 603.2,271.2 598.5,270.9 595.0,271.7 591.5,273.5 590.1,274.0 586.8,275.8 584.5,275.2 582.2,275.5 579.1,273.5ZM659.2,257.6 656.9,256.4 656.7,253.2 656.7,251.3 658.1,248.7 658.8,245.8 660.6,244.8 662.3,242.1 663.2,240.5 665.1,240.1 667.4,241.8 669.7,242.8 667.4,244.5 669.7,247.1 672.1,246.8 674.4,245.1 676.7,244.5 674.4,243.8 673.2,241.5 676.7,239.8 680.7,238.4 680.2,240.5 681.4,242.1 679.1,243.8 677.4,244.8 679.8,246.5 681.6,247.8 684.2,250.0 686.1,252.0 688.6,255.1 688.6,256.4 686.1,258.3 684.2,258.3 680.2,258.6 677.4,257.3 676.3,257.3 673.5,255.1 670.9,255.1 668.6,255.4 665.1,257.3 661.6,257.6 659.2,257.6ZM703.1,242.8 705.9,240.5 710.6,238.7 715.3,239.4 715.7,243.8 711.8,244.8 711.3,247.8 714.1,252.6 714.8,256.7 717.1,258.9 715.3,261.3 717.1,264.3 717.6,268.8 716.4,270.6 711.8,270.9 708.3,269.1 705.9,268.5 705.5,265.8 706.6,262.8 707.8,260.1 707.1,258.3 704.8,255.1 702.4,252.0 702.0,248.7 701.3,246.8 703.1,242.8ZM667.4,290.2 667.9,293.7 669.7,297.1 670.9,299.2 673.2,304.4 675.1,308.2 677.7,312.0 678.4,316.7 680.2,319.4 682.1,323.1 683.7,326.5 686.1,328.4 688.4,330.6 690.7,332.8 692.6,334.0 693.1,333.5 691.4,329.2 690.7,326.8 688.4,321.9 686.1,317.0 683.0,312.0 681.4,306.9 678.4,303.6 675.6,299.2 673.2,295.2 673.2,291.2 672.1,293.9 671.4,295.8 669.7,293.9 667.4,290.2ZM722.7,297.4 719.9,298.7 717.6,298.9 714.1,296.6 711.5,295.5 710.1,292.9 708.3,289.9 705.5,289.1 703.6,291.2 704.8,294.7 707.1,297.9 708.7,299.2 709.7,302.3 710.6,300.2 712.0,300.7 711.8,304.1 714.1,305.1 718.5,304.9 720.6,302.3 722.7,300.0ZM616.3,197.6 619.3,197.6 620.9,202.7 621.6,206.5 624.7,207.3 628.4,204.4 630.0,201.5 630.3,196.3 630.7,193.1 633.5,190.9 635.4,188.1 632.4,184.4 631.9,180.0 632.4,175.0 634.7,172.5 639.4,168.3 641.7,164.0 643.6,158.5 647.5,157.3 650.6,160.2 650.3,164.0 646.4,167.8 642.9,170.9 641.2,174.5 641.7,180.0 641.5,183.4 643.6,185.3 646.4,187.2 649.9,186.3 654.6,184.8 658.1,184.8 662.0,187.7 656.9,189.5 653.4,189.5 649.4,189.5 646.4,191.3 646.4,194.0 648.2,194.9 648.2,199.3 646.4,200.6 644.0,198.0 641.7,199.3 640.5,202.7 640.8,206.1 639.4,209.4 637.0,211.4 634.9,211.0 632.4,209.8 628.9,211.8 624.7,213.4 623.0,211.4 619.8,212.6 617.2,213.0 615.3,211.4 614.4,209.0 614.9,205.7 615.6,202.7 616.3,197.6ZM687.2,153.9 682.6,156.2 675.6,151.5 668.6,150.3 667.4,153.3 672.1,159.0 672.8,164.6 676.7,167.3 680.2,165.7 679.1,162.4 684.9,164.0 686.1,159.0 690.7,156.2 694.3,155.1 693.1,154.5ZM376.4,239.4 383.2,233.9 385.5,232.1 389.7,232.8 393.2,235.6 393.9,239.4 391.8,240.1 387.4,240.5 385.5,238.7 386.5,237.0 383.7,239.1 379.2,240.1ZM386.2,256.1 387.2,256.4 389.5,254.5 390.2,251.0 391.6,246.1 392.1,244.5 393.5,242.8 391.6,242.5 389.5,242.8 386.9,244.5 386.2,247.1 386.5,251.3 386.5,253.6ZM393.9,242.5 396.5,242.5 400.7,242.5 403.5,242.5 404.7,245.5 404.9,246.8 401.6,246.1 400.7,248.7 399.1,252.0 398.8,249.7 396.7,248.7 397.0,245.5 394.6,243.5ZM396.7,255.8 398.1,256.7 401.2,256.4 404.7,254.5 407.2,252.3 405.1,252.6 400.5,253.9 397.4,254.8ZM405.1,251.0 407.0,251.0 410.5,251.0 413.6,250.4 413.3,248.1 410.5,248.7 406.1,249.7ZM413.1,248.7 419.9,244.5 425.2,240.1 429.2,236.0 432.7,233.5 431.5,232.1 428.0,234.6 424.5,238.7 419.4,243.1 413.6,247.4ZM303.1,180.0 307.8,182.9 319.4,183.4 325.3,178.5 326.4,175.0 318.3,181.0 306.6,177.6ZM1143.8,180.0 1148.5,182.9 1160.1,183.4 1166.0,178.5 1167.1,175.0 1159.0,181.0 1147.3,177.6ZM299.6,161.8 306.6,162.9 313.6,159.0 310.1,151.5 303.1,154.5ZM1140.3,161.8 1147.3,162.9 1154.3,159.0 1150.8,151.5 1143.8,154.5ZM359.1,226.3 365.0,226.3 366.1,220.7 363.8,214.6 360.3,216.1 362.6,220.7ZM1199.8,226.3 1205.7,226.3 1206.8,220.7 1204.5,214.6 1201.0,216.1 1203.3,220.7ZM334.6,194.0 339.3,192.7 351.0,190.4 341.6,190.4ZM1175.3,194.0 1180.0,192.7 1191.7,190.4 1182.3,190.4ZM665.8,364.1 670.7,363.9 671.1,365.7 669.7,369.2 666.2,369.2 665.3,366.2ZM659.5,371.1 660.4,371.1 663.4,378.6 663.9,383.3 662.7,383.6 660.4,378.6 659.7,373.9ZM671.4,385.7 672.3,385.7 673.9,391.6 673.9,397.1 672.8,397.1 671.6,391.6ZM-0.5,222.6 4.2,216.9 6.5,206.9 5.4,206.1 1.8,215.0 -4.0,221.9 -5.6,222.6ZM840.2,222.6 844.9,216.9 847.2,206.9 846.0,206.1 842.5,215.0 836.7,221.9 835.1,222.6ZM728.1,242.1 735.1,240.5 734.0,245.5 730.4,248.1 727.6,245.5ZM764.3,240.5 771.3,239.8 776.0,240.8 774.8,242.1 766.6,242.5Z" fill="#aad3df"/>
<path d="M578.2,227.8 581.0,227.1 584.5,225.6 588.0,225.6 592.7,225.2 594.8,223.8 593.8,221.5 595.5,218.5 592.2,216.9 591.5,214.6 590.3,211.0 588.0,208.1 586.8,205.3 584.5,204.8 585.7,202.3 587.3,198.5 583.3,197.6 584.5,193.6 579.8,193.6 578.7,197.1 578.0,200.6 578.4,203.6 577.5,205.7 580.1,209.0 579.8,210.2 584.0,209.8 583.8,212.2 584.5,215.4 581.7,216.1 580.5,217.7 581.7,219.6 579.4,221.9 583.3,222.6 584.5,223.8 581.0,224.5 578.2,227.8ZM576.8,220.0 577.3,215.4 577.5,213.0 578.7,211.0 576.3,208.1 574.0,207.7 571.7,209.8 571.7,211.8 568.1,212.2 568.6,216.1 569.3,218.5 567.4,221.1 569.3,222.6 572.8,221.9 576.3,220.4ZM611.6,257.0 613.0,257.0 613.7,254.5 613.5,252.0 611.6,253.2ZM611.1,264.3 612.5,264.6 614.2,263.4 614.4,258.3 613.0,257.3 610.6,258.6 611.3,261.9ZM620.5,267.3 623.0,266.7 627.9,266.4 626.8,271.2 625.1,270.9 620.7,268.5ZM646.4,274.3 652.9,275.2 652.2,276.1 646.6,275.5ZM666.9,276.6 668.6,274.9 672.3,274.0 670.9,276.3 668.6,277.2ZM56.5,278.9 59.5,279.2 62.6,277.8 66.1,277.2 66.5,279.4 68.4,280.3 70.5,278.0 74.2,276.9 75.9,275.5 77.7,276.1 79.8,274.0 79.4,270.9 80.1,266.4 82.2,264.3 82.4,261.3 81.2,257.0 78.9,257.6 77.7,259.8 77.5,263.7 76.6,266.4 74.2,268.8 71.4,270.9 70.3,269.4 68.4,273.2 67.2,274.3 63.7,274.6 60.2,274.9 57.9,277.2 56.5,278.0ZM897.2,278.9 900.2,279.2 903.3,277.8 906.8,277.2 907.2,279.4 909.1,280.3 911.2,278.0 914.9,276.9 916.6,275.5 918.4,276.1 920.5,274.0 920.1,270.9 920.8,266.4 922.9,264.3 923.1,261.3 921.9,257.0 919.6,257.6 918.4,259.8 918.2,263.7 917.3,266.4 914.9,268.8 912.1,270.9 911.0,269.4 909.1,273.2 907.9,274.3 904.4,274.6 900.9,274.9 898.6,277.2 897.2,278.0ZM77.7,256.7 80.5,255.8 81.2,253.2 85.5,255.1 88.3,252.0 91.3,251.0 88.3,248.7 83.6,245.5 82.2,243.8 81.2,247.1 81.2,250.4 78.4,251.0 77.7,253.6ZM918.4,256.7 921.2,255.8 921.9,253.2 926.1,255.1 928.9,252.0 932.0,251.0 928.9,248.7 924.3,245.5 922.9,243.8 921.9,247.1 921.9,250.4 919.1,251.0 918.4,253.6ZM53.7,280.3 56.7,279.2 59.1,281.7 57.9,285.8 56.7,287.2 54.9,286.6 54.4,284.5 53.9,282.5ZM894.4,280.3 897.4,279.2 899.8,281.7 898.6,285.8 897.4,287.2 895.5,286.6 895.1,284.5 894.6,282.5ZM60.2,281.7 62.6,278.0 65.4,278.3 64.2,280.8 61.4,282.2ZM900.9,281.7 903.3,278.0 906.1,278.3 904.9,280.8 902.1,282.2ZM82.4,242.1 85.9,240.5 84.8,237.0 85.2,231.8 88.3,231.8 85.9,224.5 85.5,218.8 84.3,211.8 82.9,213.0 83.6,220.7 82.4,226.3 82.4,235.3 81.9,240.5ZM923.1,242.1 926.6,240.5 925.4,237.0 925.9,231.8 928.9,231.8 926.6,224.5 926.1,218.8 925.0,211.8 923.6,213.0 924.3,220.7 923.1,226.3 923.1,235.3 922.6,240.5ZM31.3,308.2 32.2,304.4 34.5,302.3 35.7,303.1 34.5,306.9 33.1,311.0 31.7,309.5ZM872.0,308.2 872.9,304.4 875.2,302.3 876.4,303.1 875.2,306.9 873.8,311.0 872.4,309.5ZM4.4,317.7 7.7,315.5 10.0,316.7 8.9,319.2 6.5,320.2 4.7,319.4ZM845.1,317.7 848.4,315.5 850.7,316.7 849.5,319.2 847.2,320.2 845.3,319.4ZM31.0,325.5 32.4,319.4 36.2,319.4 36.9,323.1 34.8,326.0 35.2,329.9 40.4,330.9 40.8,334.0 38.0,332.8 33.4,331.1 32.2,329.2 31.0,327.5ZM871.7,325.5 873.1,319.4 876.9,319.4 877.6,323.1 875.5,326.0 875.9,329.9 881.1,330.9 881.5,334.0 878.7,332.8 874.1,331.1 872.9,329.2 871.7,327.5ZM35.7,347.0 39.2,345.1 41.5,342.8 43.9,340.4 46.2,344.7 45.5,348.2 43.4,349.8 41.5,348.4 39.9,345.8 36.4,347.5ZM876.4,347.0 879.9,345.1 882.2,342.8 884.6,340.4 886.9,344.7 886.2,348.2 884.1,349.8 882.2,348.4 880.6,345.8 877.1,347.5ZM35.7,338.7 38.0,336.4 41.5,334.0 44.6,337.6 43.2,339.9 40.4,340.9 38.0,342.3 35.7,340.4ZM876.4,338.7 878.7,336.4 882.2,334.0 885.3,337.6 883.9,339.9 881.1,340.9 878.7,342.3 876.4,340.4ZM24.5,343.9 29.9,338.7 30.6,337.1 29.4,339.5 25.2,344.7ZM865.2,343.9 870.6,338.7 871.3,337.1 870.1,339.5 865.9,344.7ZM5.4,359.9 6.5,364.6 8.2,369.2 9.6,370.4 14.7,370.9 18.2,372.3 21.7,372.3 22.4,368.1 23.6,365.7 25.2,362.2 28.2,361.1 25.9,359.2 26.4,355.2 27.5,352.9 29.2,351.2 26.4,349.4 24.7,347.2 22.9,348.2 20.5,351.2 19.4,351.9 17.0,353.6 14.7,355.9 11.2,357.6 10.0,359.9 7.7,359.4 6.1,358.7ZM846.0,359.9 847.2,364.6 848.8,369.2 850.2,370.4 855.4,370.9 858.9,372.3 862.4,372.3 863.1,368.1 864.3,365.7 865.9,362.2 868.9,361.1 866.6,359.2 867.1,355.2 868.2,352.9 869.9,351.2 867.1,349.4 865.4,347.2 863.6,348.2 861.2,351.2 860.1,351.9 857.7,353.6 855.4,355.9 851.9,357.6 850.7,359.9 848.4,359.4 846.7,358.7ZM-26.6,350.3 -21.5,351.2 -19.2,354.3 -15.7,357.6 -13.3,359.2 -9.8,361.5 -7.5,364.6 -5.2,367.6 -1.7,370.4 -1.9,373.9 -2.1,377.0 -5.2,377.2 -8.7,374.6 -11.0,372.7 -13.3,369.2 -15.7,365.7 -18.0,362.2 -19.2,359.4 -21.5,357.6 -25.0,354.5 -26.9,351.7ZM814.0,350.3 819.2,351.2 821.5,354.3 825.0,357.6 827.4,359.2 830.9,361.5 833.2,364.6 835.5,367.6 839.0,370.4 838.8,373.9 838.6,377.0 835.5,377.2 832.0,374.6 829.7,372.7 827.4,369.2 825.0,365.7 822.7,362.2 821.5,359.4 819.2,357.6 815.7,354.5 813.8,351.7ZM-3.5,379.3 -1.2,377.4 1.8,377.4 4.2,378.6 8.9,379.3 11.2,378.8 14.2,379.6 18.2,381.4 18.0,383.8 12.4,382.9 8.9,382.4 4.2,381.7 -0.5,380.7 -2.8,379.6ZM837.2,379.3 839.5,377.4 842.5,377.4 844.9,378.6 849.5,379.3 851.9,378.8 854.9,379.6 858.9,381.4 858.7,383.8 853.0,382.9 849.5,382.4 844.9,381.7 840.2,380.7 837.9,379.6ZM19.4,382.9 22.9,382.6 28.7,382.9 32.2,382.9 36.9,382.9 38.5,383.1 42.7,382.6 47.9,383.1 42.7,385.2 40.4,387.3 38.7,387.6 36.9,384.5 31.0,384.3 27.5,384.0 22.9,384.3 19.4,384.0ZM860.1,382.9 863.6,382.6 869.4,382.9 872.9,382.9 877.6,382.9 879.2,383.1 883.4,382.6 888.5,383.1 883.4,385.2 881.1,387.3 879.4,387.6 877.6,384.5 871.7,384.3 868.2,384.0 863.6,384.3 860.1,384.0ZM29.9,376.3 29.6,371.6 28.2,369.9 29.9,366.9 30.6,363.4 31.5,361.5 34.5,361.1 38.0,361.3 41.5,360.6 43.2,359.7 41.5,362.2 38.0,362.5 33.4,362.2 31.5,364.1 33.4,365.7 36.9,365.3 39.0,365.5 35.7,367.6 34.5,369.2 36.4,371.6 38.5,374.4 36.9,375.8 34.5,373.9 33.1,371.6 32.2,375.1 32.0,376.5ZM870.6,376.3 870.3,371.6 868.9,369.9 870.6,366.9 871.3,363.4 872.2,361.5 875.2,361.1 878.7,361.3 882.2,360.6 883.9,359.7 882.2,362.2 878.7,362.5 874.1,362.2 872.2,364.1 874.1,365.7 877.6,365.3 879.7,365.5 876.4,367.6 875.2,369.2 877.1,371.6 879.2,374.4 877.6,375.8 875.2,373.9 873.8,371.6 872.9,375.1 872.7,376.5ZM48.6,359.2 50.9,359.9 49.7,362.2 50.9,364.6 49.3,364.6 48.6,361.5ZM889.2,359.2 891.6,359.9 890.4,362.2 891.6,364.6 889.9,364.6 889.2,361.5ZM49.3,371.1 55.6,370.4 56.3,372.0 50.9,371.8ZM889.9,371.1 896.3,370.4 897.0,372.0 891.6,371.8ZM56.7,366.2 60.2,364.3 63.7,365.5 66.1,370.9 69.6,368.5 73.1,367.4 77.7,369.0 80.1,369.5 85.9,371.6 89.4,373.9 91.3,376.3 95.3,378.1 96.0,381.0 97.6,383.3 99.9,385.7 103.0,387.6 99.9,387.8 95.3,386.9 92.9,384.5 90.6,382.1 87.1,381.4 85.9,383.3 83.6,385.0 80.1,384.7 76.6,382.6 74.2,382.9 73.1,380.3 72.6,376.3 68.4,374.2 64.9,372.5 61.4,372.7 59.1,370.9 60.9,369.0 59.1,368.5 56.7,366.9ZM897.4,366.2 900.9,364.3 904.4,365.5 906.8,370.9 910.3,368.5 913.8,367.4 918.4,369.0 920.8,369.5 926.6,371.6 930.1,373.9 932.0,376.3 935.9,378.1 936.7,381.0 938.3,383.3 940.6,385.7 943.7,387.6 940.6,387.8 935.9,386.9 933.6,384.5 931.3,382.1 927.8,381.4 926.6,383.3 924.3,385.0 920.8,384.7 917.3,382.6 914.9,382.9 913.8,380.3 913.3,376.3 909.1,374.2 905.6,372.5 902.1,372.7 899.8,370.9 901.6,369.0 899.8,368.5 897.4,366.9ZM97.6,376.3 102.3,375.1 105.8,373.2 106.9,375.1 103.4,377.4 99.9,377.9ZM938.3,376.3 943.0,375.1 946.5,373.2 947.6,375.1 944.1,377.4 940.6,377.9ZM83.6,388.5 85.2,392.8 85.9,396.4 88.3,397.1 90.1,398.8 90.6,402.5 91.8,404.9 92.5,408.6 95.3,409.8 98.3,412.3 99.9,416.8 103.0,417.9 104.1,421.2 107.6,424.5 108.6,427.6 109.3,431.6 109.5,434.2 108.1,439.6 106.9,443.7 104.1,447.6 103.0,450.7 101.1,455.1 100.9,458.0 96.4,458.9 94.1,460.7 92.5,462.5 89.9,461.0 88.3,460.4 85.9,461.9 81.2,460.7 78.9,459.5 77.0,457.1 76.6,453.6 73.5,452.5 74.2,449.3 73.1,446.5 72.6,444.6 71.9,447.4 70.7,450.2 68.4,450.7 67.2,449.6 66.5,447.9 64.2,444.6 60.2,442.3 56.7,441.0 52.1,441.5 47.4,443.2 42.7,444.6 40.4,446.5 39.2,447.6 34.5,447.6 29.9,448.5 26.4,450.7 22.9,450.7 19.4,448.8 19.6,446.5 21.0,443.7 21.0,441.0 19.4,436.9 19.1,434.2 17.5,430.2 15.9,427.6 15.9,423.7 16.6,419.9 17.0,416.1 20.5,414.8 23.3,412.6 27.8,411.8 31.0,409.8 34.5,407.4 36.4,404.9 38.0,402.5 39.9,402.5 41.5,400.0 43.9,397.6 46.9,395.9 49.7,398.4 53.2,398.6 53.9,395.2 55.6,392.8 57.9,392.1 60.2,390.4 62.6,391.2 66.1,391.9 69.6,391.4 70.5,392.3 68.4,394.7 67.2,398.8 69.6,400.5 73.1,403.2 76.6,404.9 79.6,404.9 81.2,401.3 81.5,396.4 81.5,392.8 82.4,389.2ZM924.3,388.5 925.9,392.8 926.6,396.4 928.9,397.1 930.8,398.8 931.3,402.5 932.4,404.9 933.1,408.6 935.9,409.8 939.0,412.3 940.6,416.8 943.7,417.9 944.8,421.2 948.3,424.5 949.3,427.6 950.0,431.6 950.2,434.2 948.8,439.6 947.6,443.7 944.8,447.6 943.7,450.7 941.8,455.1 941.6,458.0 937.1,458.9 934.8,460.7 933.1,462.5 930.6,461.0 928.9,460.4 926.6,461.9 921.9,460.7 919.6,459.5 917.7,457.1 917.3,453.6 914.2,452.5 914.9,449.3 913.8,446.5 913.3,444.6 912.6,447.4 911.4,450.2 909.1,450.7 907.9,449.6 907.2,447.9 904.9,444.6 900.9,442.3 897.4,441.0 892.7,441.5 888.1,443.2 883.4,444.6 881.1,446.5 879.9,447.6 875.2,447.6 870.6,448.5 867.1,450.7 863.6,450.7 860.1,448.8 860.3,446.5 861.7,443.7 861.7,441.0 860.1,436.9 859.8,434.2 858.2,430.2 856.6,427.6 856.6,423.7 857.3,419.9 857.7,416.1 861.2,414.8 864.0,412.6 868.5,411.8 871.7,409.8 875.2,407.4 877.1,404.9 878.7,402.5 880.6,402.5 882.2,400.0 884.6,397.6 887.6,395.9 890.4,398.4 893.9,398.6 894.6,395.2 896.3,392.8 898.6,392.1 900.9,390.4 903.3,391.2 906.8,391.9 910.3,391.4 911.2,392.3 909.1,394.7 907.9,398.8 910.3,400.5 913.8,403.2 917.3,404.9 920.3,404.9 921.9,401.3 922.2,396.4 922.2,392.8 923.1,389.2ZM88.5,467.6 92.9,468.9 97.1,468.2 97.1,472.3 96.2,475.5 93.6,476.8 91.3,475.8 89.9,472.3 88.7,470.1ZM929.2,467.6 933.6,468.9 937.8,468.2 937.8,472.3 936.9,475.5 934.3,476.8 932.0,475.8 930.6,472.3 929.4,470.1ZM154.1,449.0 156.0,450.7 158.1,453.0 159.0,455.9 160.6,455.4 161.6,458.0 164.1,459.5 167.7,458.6 166.5,462.5 164.1,463.4 163.7,466.1 161.8,468.5 159.9,470.4 158.5,469.2 159.5,466.7 158.5,464.9 156.7,463.4 158.5,461.3 158.5,458.0 157.1,455.1 154.8,452.2ZM994.8,449.0 996.7,450.7 998.8,453.0 999.7,455.9 1001.3,455.4 1002.3,458.0 1004.8,459.5 1008.3,458.6 1007.2,462.5 1004.8,463.4 1004.4,466.1 1002.5,468.5 1000.6,470.4 999.2,469.2 1000.2,466.7 999.2,464.9 997.4,463.4 999.2,461.3 999.2,458.0 997.8,455.1 995.5,452.2ZM153.9,467.0 155.3,468.5 157.8,469.8 156.7,472.6 154.8,474.8 154.3,477.4 150.8,479.4 149.7,484.0 146.6,486.7 143.8,486.7 139.6,484.7 140.3,482.3 143.1,478.7 146.6,476.4 149.7,474.2 151.3,471.0 152.5,468.2ZM994.6,467.0 996.0,468.5 998.5,469.8 997.4,472.6 995.5,474.8 995.0,477.4 991.5,479.4 990.4,484.0 987.3,486.7 984.5,486.7 980.3,484.7 981.0,482.3 983.8,478.7 987.3,476.4 990.4,474.2 992.0,471.0 993.2,468.2ZM706.6,391.6 708.3,395.2 709.4,400.0 707.8,403.7 706.6,407.4 704.8,412.3 703.1,417.3 701.3,423.7 697.8,425.3 695.4,424.2 693.6,419.9 692.8,416.1 694.3,411.1 694.7,406.1 694.3,403.7 695.4,401.7 698.9,400.8 701.3,398.8 702.4,396.4 704.3,395.2 705.9,392.3ZM778.1,340.4 779.5,340.9 781.4,343.5 782.8,345.8 782.3,348.2 779.7,349.6 778.3,348.2 777.9,344.7ZM448.3,503.4 456.1,503.0 456.8,505.3 453.7,507.2 449.0,506.1ZM502.8,513.8 507.4,514.6 507.9,517.0 503.9,515.8ZM227.2,315.2 229.5,316.5 230.0,317.2 227.9,318.4 227.0,316.7ZM1067.9,315.2 1070.2,316.5 1070.7,317.2 1068.6,318.4 1067.7,316.7ZM225.6,313.2 227.2,313.5 226.3,314.2ZM1066.3,313.2 1067.9,313.5 1067.0,314.2ZM221.8,311.7 223.2,312.0 222.5,312.7ZM1062.5,311.7 1063.9,312.0 1063.2,312.7ZM133.8,411.6 136.1,412.6 140.8,416.6 139.6,417.1 135.0,413.6ZM974.5,411.6 976.8,412.6 981.5,416.6 980.3,417.1 975.6,413.6ZM140.8,398.8 142.7,399.3 144.3,402.5 143.8,405.7 142.0,401.7ZM981.5,398.8 983.4,399.3 985.0,402.5 984.5,405.7 982.7,401.7ZM116.3,379.3 119.8,381.0 125.6,383.3 129.1,388.1 126.8,386.9 122.1,384.5 117.4,382.1ZM957.0,379.3 960.5,381.0 966.3,383.3 969.8,388.1 967.5,386.9 962.8,384.5 958.1,382.1ZM164.8,404.9 167.7,404.4 167.9,406.6 165.3,406.6ZM1005.5,404.9 1008.3,404.4 1008.6,406.6 1006.0,406.6ZM111.8,375.6 113.9,377.4 114.9,379.3 113.2,378.6ZM952.5,375.6 954.6,377.4 955.6,379.3 953.9,378.6ZM102.3,369.2 106.9,371.6 108.1,373.9 104.6,371.6ZM943.0,369.2 947.6,371.6 948.8,373.9 945.3,371.6ZM40.4,386.9 43.9,384.5 48.1,383.1 46.2,384.5 41.5,387.3ZM881.1,386.9 884.6,384.5 888.8,383.1 886.9,384.5 882.2,387.3Z" fill="#f2efe9" stroke="#f2efe9" stroke-width="0.6" stroke-linejoin="round"/>
<path d="M304.3,231.8 369.2,231.8 369.2,230.3 370.1,232.5 382.3,235.3 385.1,234.2 393.5,239.1 395.1,240.5 399.1,244.5 398.8,252.0 397.4,255.1 407.0,253.6 407.0,251.0 412.9,250.0 413.3,248.1 416.8,245.5 424.5,245.5 425.9,244.5 428.0,240.5 429.9,237.2 432.2,237.5 433.2,238.4 433.2,243.1 434.8,245.1M1145.0,231.8 1209.9,231.8 1209.9,230.3 1210.8,232.5 1223.0,235.3 1225.8,234.2 1234.2,239.1 1235.8,240.5 1239.8,244.5 1239.5,252.0 1238.1,255.1 1247.7,253.6 1247.7,251.0 1253.5,250.0 1254.0,248.1 1257.5,245.5 1265.2,245.5 1266.6,244.5 1268.7,240.5 1270.6,237.2 1272.9,237.5 1273.9,238.4 1273.9,243.1 1275.5,245.1M262.2,133.9 262.2,185.8 266.7,185.8 270.4,191.8 275.1,188.1 279.7,194.5 284.4,202.7 287.9,207.7 286.5,210.2M1102.9,133.9 1102.9,185.8 1107.4,185.8 1111.1,191.8 1115.8,188.1 1120.4,194.5 1125.1,202.7 1128.6,207.7 1127.2,210.2M318.0,283.1 323.6,282.5 323.4,283.1 332.3,286.4 338.8,286.4 338.8,285.0 342.8,285.0 347.5,291.0 350.7,292.6 352.4,290.4 354.7,290.4 359.1,296.6 364.5,300.7M1158.7,283.1 1164.3,282.5 1164.1,283.1 1173.0,286.4 1179.5,286.4 1179.5,285.0 1183.5,285.0 1188.2,291.0 1191.4,292.6 1193.1,290.4 1195.4,290.4 1199.8,296.6 1205.2,300.7M376.2,329.2 376.2,327.5 377.4,325.3 380.4,325.3 380.4,321.1 383.4,321.1 385.3,319.4M383.4,321.1 383.2,325.8 385.5,326.3M383.2,325.8 382.7,329.4 386.5,331.8M397.2,328.0 391.8,330.4 387.6,332.8M396.0,337.6 391.4,337.3M398.6,340.9 397.9,344.7M410.8,343.0 411.2,344.9M425.0,335.6 422.9,337.3 422.2,342.1 422.4,346.1 427.8,347.0 433.6,348.9 433.2,352.9 434.3,358.7 435.3,360.6M451.4,343.5 448.6,347.7 448.6,351.2 449.8,352.2 445.5,354.1 442.0,354.1 440.2,360.1 435.3,360.6M457.9,349.6 456.1,354.5 458.4,358.7M465.4,350.1 464.7,356.4 464.0,358.0M449.8,352.2 451.9,353.6 452.6,360.4 456.1,359.9 458.4,358.7 460.7,359.0 464.0,358.0 469.1,357.8 471.0,353.6M435.3,360.6 429.2,360.8 428.3,373.2M407.0,360.6 411.7,362.7 415.9,363.6 419.6,366.4 423.4,369.2 428.0,373.2M404.0,371.3 405.8,373.9 408.2,371.6 411.7,368.8 415.9,363.6M428.0,373.2 421.3,375.3 419.2,380.7 421.7,385.5 426.9,385.7 426.6,389.2 429.0,389.2M429.0,389.2 430.4,394.0 429.4,400.0 429.2,404.9 427.3,407.1M429.0,389.2 431.5,389.2 438.5,386.9 440.9,392.8 447.2,395.2 450.2,395.9 451.4,402.0 455.4,402.0 456.1,404.9 457.0,406.1M429.2,404.9 431.5,409.8 432.7,414.8 434.6,418.1 432.2,421.2 431.5,428.9 429.0,436.9 428.0,446.5 426.9,453.6 425.2,462.5 423.8,471.7 424.3,479.7 422.7,489.8 420.6,498.6 423.4,505.3 430.4,506.1 431.8,507.2M431.3,508.3 431.3,517.4M434.6,418.1 440.9,416.6 444.8,416.1 449.0,410.6 453.5,409.3 456.1,404.9M445.3,416.6 451.4,421.2 457.0,425.0 463.1,429.4 464.0,425.3M457.0,416.1 461.7,417.6 464.0,425.3M464.0,425.3 465.9,429.2 460.7,432.9 457.0,437.4M457.0,437.4 460.7,439.6 466.8,447.1M457.0,437.4 455.6,445.1 455.1,447.9M560.7,296.0 571.2,296.0M571.2,297.1 571.2,300.5 563.5,300.5 563.5,306.9 561.1,312.5 551.8,312.5M587.3,275.8 587.5,281.7 583.1,285.3 571.2,293.4 571.2,297.1 580.3,303.1 594.3,313.2 601.3,317.7 605.0,317.0 619.5,306.9M580.3,303.1 577.5,313.2 578.7,324.3 564.6,326.8 563.0,328.7 558.8,324.3 553.0,325.1M611.3,270.6 610.2,281.7 613.7,289.4 614.9,304.4 619.5,306.9M649.9,285.6 649.9,310.7 677.4,310.7M619.5,306.9 626.5,308.2 647.5,317.0 647.5,315.7 649.9,315.7 649.9,310.7M626.5,308.2 627.7,314.5 623.3,331.1M601.3,317.7 599.7,327.2 592.2,328.2 586.8,328.0 578.7,324.3M599.9,335.9 612.5,333.3 624.7,332.5M647.5,317.0 644.0,330.4 645.0,337.8 654.6,341.1 668.6,339.9 670.9,343.5 675.6,332.8 677.4,310.7M597.8,348.4 599.9,335.9M611.6,352.6 617.2,348.2 623.3,339.9 624.7,332.5M623.3,331.1 627.7,342.3 634.9,344.7 645.0,337.8M591.3,337.3 585.0,337.6 578.7,339.0 572.8,339.2 564.6,334.2 559.5,333.5 552.5,334.2M578.7,339.0 584.5,351.5M591.3,337.3 592.7,349.4M572.8,339.2 574.0,353.1M564.6,347.0 567.4,343.5 560.7,340.4M628.9,358.3 634.9,353.6 643.8,353.6 649.9,351.2 655.7,351.2 663.9,354.5M620.2,377.4 627.7,373.5 629.3,368.1 633.1,363.4 634.9,353.6M614.4,358.3 617.9,358.3 628.9,358.3M617.9,358.3 617.9,361.1 624.2,369.2 619.5,375.1M620.2,377.4 630.0,380.3 641.7,381.0 642.9,389.2 647.5,389.2 656.9,392.8 660.4,392.1 658.1,383.3 659.7,373.9 659.9,366.9 661.6,361.1 663.9,354.5M642.9,389.2 642.9,394.0 640.5,406.1M619.1,404.4 637.0,405.7 640.5,406.1 646.4,404.9 650.6,405.7M640.5,406.1 640.5,416.1 638.2,416.1 638.2,423.2 638.2,432.6 630.0,433.1M638.2,423.2 645.2,424.5 651.0,425.8 654.6,421.2 659.9,416.6 664.6,417.1 666.2,422.4 668.3,428.4M650.6,405.7 656.9,402.5 662.7,400.3 668.1,403.0 668.3,409.8 664.6,417.1M650.6,405.7 652.2,411.1 659.9,416.6M670.9,365.7 679.1,371.6 683.0,374.4M661.6,361.1 670.9,361.1 670.9,365.7M659.9,366.9 670.7,365.7M687.2,367.4 687.2,354.1 682.6,355.2 675.6,352.9 670.9,352.9 668.6,355.2 663.9,354.5M687.2,354.1 694.3,352.2 703.6,344.7 693.1,341.1 691.4,337.6M693.1,341.1 695.4,339.0M686.1,388.1 673.2,390.4 667.4,385.7 661.6,383.3 660.4,392.1M667.4,385.7 668.6,396.4 673.2,402.5 674.4,397.6M675.6,332.8 680.2,329.2 688.4,330.6M675.6,332.8 680.2,343.5 684.9,343.5 691.4,337.6M671.4,286.4 673.0,291.2M570.7,255.4 576.3,256.4 575.4,261.3 574.0,265.8 574.2,269.7M587.3,250.7 592.7,252.9 599.0,253.9M597.3,224.1 601.3,228.2 606.0,230.0 610.6,231.8 609.2,236.7 605.5,241.1 607.8,242.5 609.0,249.4M605.5,215.0 607.8,220.0 605.5,224.5 606.0,230.0M599.4,223.0 605.5,224.5M624.7,213.4 625.6,220.7 626.5,224.5 619.8,227.1 623.7,232.5 621.9,233.5 614.9,237.0 609.2,236.7M626.5,224.5 635.4,230.0 644.0,231.4 647.5,225.2 646.4,220.0 646.4,213.0 644.7,211.4 637.0,211.4M640.5,204.8 653.4,206.1 657.4,204.0M640.5,204.8 646.4,213.0M648.2,197.1 655.7,198.5 656.9,189.5M641.7,198.5 648.2,197.1M657.4,204.0 663.9,213.0 666.2,216.9 665.1,220.7 662.7,223.4 647.5,225.2M666.2,216.9 674.4,226.3 684.9,229.6 680.7,238.4M644.0,231.4 647.5,235.6 653.6,234.2 657.4,243.8 660.6,244.8M644.5,248.1 649.9,249.7 656.9,249.4M656.9,255.1 652.2,256.1 652.9,258.6M652.2,256.1 645.2,257.0 640.5,258.6 638.9,262.5M630.0,240.5 635.9,242.5 644.5,248.1M628.9,232.8 631.2,235.3 642.9,234.2 644.0,231.4M613.7,237.0 628.9,232.8 630.0,240.5 623.5,240.5 620.7,238.7 616.0,239.4 612.5,242.1 607.8,242.5M623.3,243.8 627.7,242.1 630.0,240.5M637.0,245.8 636.3,252.0 634.7,253.6M636.3,252.0 639.4,255.1 641.7,254.2 644.5,248.1M637.0,255.8 639.4,255.1 640.5,258.6M618.4,191.8 620.7,180.0 624.2,164.6 630.0,147.3 638.2,137.9 647.5,156.2M638.2,137.9 640.5,134.6 658.1,132.6 659.2,137.9 658.1,156.2 661.6,172.5 656.9,184.8M702.4,242.8 705.9,237.0 710.6,226.3 719.9,225.2 734.0,224.5 734.0,215.0 745.6,209.0 762.0,213.0 770.1,213.0 779.5,224.5 785.3,224.5 794.7,231.8M-46.0,231.8 -34.3,226.3 -20.3,220.7 -11.0,222.6 3.0,230.0 21.7,228.2 31.0,218.8 42.7,216.1 48.6,228.2 56.7,236.3 65.6,234.2 61.4,245.5 56.7,252.6 55.8,253.9M794.7,231.8 806.3,226.3 820.4,220.7 829.7,222.6 843.7,230.0 862.4,228.2 871.7,218.8 883.4,216.1 889.2,228.2 897.4,236.3 906.3,234.2 902.1,245.5 897.4,252.6 896.5,253.9M-44.2,231.1 -36.7,243.8 -25.0,252.6 -4.0,256.1 10.0,250.4 21.7,240.5 29.9,238.7 21.7,228.2M796.5,231.1 804.0,243.8 815.7,252.6 836.7,256.1 850.7,250.4 862.4,240.5 870.6,238.7 862.4,228.2M794.7,231.8 791.2,238.7 784.2,244.5 779.0,255.1 769.0,259.8 766.2,265.8 765.5,270.3M715.3,255.1 722.3,257.3 734.0,247.1 745.6,252.0 753.8,258.3 762.0,252.0 779.0,255.1M722.3,257.3 722.3,245.5 715.3,243.8M717.4,269.4 724.6,266.7 732.8,271.7 734.4,274.3 743.3,269.7 750.3,270.3 758.5,268.8 765.5,270.3M734.4,274.3 734.0,285.8 736.3,291.2 739.1,298.9 735.4,302.8M758.5,268.8 757.3,278.9 753.8,281.7 746.8,287.2 736.3,291.2M765.5,270.3 766.6,283.1 765.5,287.2 757.3,295.2 756.1,301.8 750.8,306.4M773.6,274.6 776.0,283.1 780.7,289.4 787.7,293.9 797.0,296.6 806.3,295.8 818.0,294.4M797.0,299.2 799.3,310.7M807.5,310.7 809.8,305.6 813.3,299.2 818.0,294.4M818.0,294.4 821.5,304.4 827.4,312.0 821.5,315.7 820.4,324.3 822.7,338.7M-13.3,312.0 -6.3,308.7 3.0,312.0M827.4,312.0 834.4,308.7 843.7,312.0M-6.3,308.7 -4.0,318.2 1.8,328.0 -0.5,336.4M834.4,308.7 836.7,318.2 842.5,328.0 840.2,336.4M-14.5,315.7 -6.3,320.7 -2.8,329.2 -9.8,335.2M826.2,315.7 834.4,320.7 837.9,329.2 830.9,335.2M694.3,262.8 696.1,269.7 698.9,276.1 702.4,284.5 704.8,289.9M676.0,271.4 689.6,270.0 696.1,269.7M674.9,282.5 682.6,283.6 689.6,287.2 701.3,292.6M677.7,291.2 682.6,283.6M689.6,270.0 687.2,277.5 682.6,283.6M691.4,324.3 701.3,323.1 712.9,318.2 721.1,315.7 719.9,309.5 711.8,304.9M684.9,250.4 700.1,255.8 704.8,255.8M688.4,256.7 693.1,258.3 700.1,255.8M694.3,262.8 698.9,264.3 703.6,265.8M41.5,261.3 45.1,258.3 49.7,255.1 55.8,253.9M882.2,261.3 885.7,258.3 890.4,255.1 896.5,253.9M46.2,267.9 50.9,265.8M886.9,267.9 891.6,265.8M80.1,369.5 80.1,384.7M920.8,369.5 920.8,384.7M6.8,359.0 12.4,359.9 18.2,359.9 21.7,356.4 25.2,353.6M847.4,359.0 853.0,359.9 858.9,359.9 862.4,356.4 865.9,353.6M52.1,398.6 52.1,441.5M892.7,398.6 892.7,441.5M52.1,426.3 80.1,426.3M892.7,426.3 920.8,426.3M73.1,403.2 73.1,426.3M913.8,403.2 913.8,426.3M80.1,426.3 80.1,459.5M920.8,426.3 920.8,459.5M80.1,434.2 98.8,433.7 109.3,432.1M920.8,434.2 939.5,433.7 950.0,432.1M80.1,447.9 87.1,453.6 96.4,456.5 101.1,458.0M920.8,447.9 927.8,453.6 937.1,456.5 941.8,458.0" fill="none" stroke="#cfbccb" stroke-width="0.8" stroke-linejoin="round"/>
</svg>
<div id="rstrip"></div>
<div id="header">
  <div class="t" style="left:8px;top:5px;font-size:14px;font-weight:bold;color:#2c4f8f;transform:scaleX(0.73);transform-origin:0 0">Map Analysis</div>
  <div class="t" style="left:27.5px;top:22.5px;font-size:10.4px;font-weight:bold;color:#2c4f8f;transform:scaleX(0.7);transform-origin:0 0">MAP<span style="color:#f3c41a">OG</span></div>
  <!-- nav icons -->
  <svg class="ico" style="left:108px;top:5px" width="15" height="15" viewBox="0 0 24 24"><path d="M19.35 10.04C18.67 6.59 15.64 4 12 4 9.11 4 6.6 5.64 5.35 8.04 2.34 8.36 0 10.91 0 14c0 3.31 2.69 6 6 6h13c2.76 0 5-2.24 5-5 0-2.64-2.05-4.78-4.65-4.96zM14 13v4h-4v-4H7l5-5 5 5h-3z"/></svg>
  <div class="t nav" style="left:87px;top:23px">Add Upload</div>
  <svg class="ico" style="left:174px;top:6px" width="13" height="13" viewBox="0 0 24 24"><path d="M4 6H2v14c0 1.1.9 2 2 2h14v-2H4V6zm16-4H8c-1.1 0-2 .9-2 2v12c0 1.1.9 2 2 2h12c1.1 0 2-.9 2-2V4c0-1.1-.9-2-2-2zm-1 9h-4v4h-2v-4H9V9h4V5h2v4h4v2z"/></svg>
  <div class="t nav" style="left:154px;top:23px">Gis Library</div>
  <svg class="ico" style="left:240px;top:6px" width="13" height="13" viewBox="0 0 24 24"><path d="M12 2C8.13 2 5 5.13 5 9c0 5.25 7 13 7 13s7-7.75 7-13c0-3.870-3.13-7-7-7zm0 9.5c-1.38 0-2.5-1.12-2.5-2.5s1.12-2.5 2.5-2.5 2.5 1.12 2.5 2.5-1.12 2.5-2.5 2.5z"/></svg>
  <div class="t nav" style="left:217px;top:23px">Create Data</div>
  <svg class="ico" style="left:303px;top:6px" width="15" height="13" viewBox="0 0 24 22"><path d="M16.56 8.94L7.62 0 6.21 1.41l2.38 2.38-5.15 5.15c-.59.59-.59 1.54 0 2.12l5.5 5.5c.29.29.68.44 1.06.44s.77-.15 1.06-.44l5.5-5.5c.59-.58.59-1.53 0-2.12zM5.21 10L10 5.21 14.79 10H5.21zM19 11.5s-2 2.170-2 3.5c0 1.1.9 2 2 2s2-.9 2-2c0-1.33-2-3.5-2-3.5z"/><rect x="1" y="19.5" width="22" height="2.5"/></svg>
  <div class="t nav" style="left:285.5px;top:23px">Style Data</div>
  <svg class="ico" style="left:371px;top:6px" width="14" height="13" viewBox="0 0 24 24"><circle cx="4" cy="4" r="2.6"/><circle cx="4" cy="20" r="2.6"/><circle cx="14" cy="4" r="2.6"/><circle cx="20" cy="4" r="2.6"/><path d="M3 4h2v16H3zM4 19h6v2H4z"/><path d="M11 21l1-4 8-8 3 3-8 8z"/></svg>
  <div class="t nav" style="left:346px;top:23px">Process Data</div>
  <svg class="ico" style="left:445px;top:5px" width="15" height="15" viewBox="0 0 24 24"><path d="M19.88 18.47c.44-.7.7-1.51.7-2.39 0-2.49-2.01-4.5-4.5-4.5s-4.5 2.01-4.5 4.5 2.01 4.5 4.49 4.5c.88 0 1.7-.26 2.39-.7L21.58 23 23 21.58l-3.12-3.11zm-3.8.11c-1.38 0-2.5-1.12-2.5-2.5s1.12-2.5 2.5-2.5 2.5 1.12 2.5 2.5-1.12 2.5-2.5 2.5zm-.36-8.5c-.74.02-1.45.18-2.1.45l-.55-.83-3.8 6.18-3.01-3.52-3.63 5.81L1 17l5-8 3 3.5L13 6l2.72 4.08zm2.59.5c-.64-.28-1.330-.45-2.05-.49L21.38 2 23 3.18l-4.69 7.4z"/></svg>
  <div class="t nav" style="left:420px;top:23px">Analyze Data</div>
  <svg class="ico" style="left:514px;top:5px" width="13" height="14" viewBox="0 0 24 24"><path d="M18 16.08c-.76 0-1.44.3-1.96.77L8.91 12.7c.05-.23.09-.46.09-.7s-.04-.47-.09-.7l7.05-4.11c.54.5 1.25.81 2.04.81 1.66 0 3-1.34 3-3s-1.34-3-3-3-3 1.34-3 3c0 .24.04.47.09.7L8.04 9.81C7.5 9.31 6.79 9 6 9c-1.66 0-3 1.34-3 3s1.34 3 3 3c.79 0 1.5-.31 2.04-.81l7.12 4.16c-.05.21-.08.43-.08.65 0 1.61 1.31 2.92 2.920 2.92 1.61 0 2.92-1.31 2.92-2.92s-1.31-2.92-2.92-2.92z"/></svg>
  <div class="t nav" style="left:494px;top:23px">Share Map</div>
  <!-- right -->
  <div class="abs" style="left:880px;top:5px;width:75px;height:27px;border:1px solid #c4c4c4;border-radius:14px"></div>
  <div class="t" style="left:889px;top:12.5px;font-size:12px;color:#555">Dashboard</div>
  <div class="t" style="left:964px;top:12.5px;font-size:12px;color:#555">Contact us</div>
  <div class="t" style="left:1029.5px;top:12.5px;font-size:12px;color:#555;letter-spacing:-0.9px">FAQ</div>
  <div class="t" style="left:1059px;top:12.5px;font-size:12px;color:#555">Pricing |</div>
  <svg class="abs" style="left:1119.5px;top:6.5px" width="15" height="15" viewBox="0 0 24 24"><path fill="#5a5a5a" d="M12 1.5L2.5 6.5 12 11.5l9.5-5z"/><path fill="#3d3d3d" d="M2 7.5v10.5l9.2 5V12.5z"/><path fill="#6e6e6e" d="M22 7.5v10.5l-9.2 5V12.5z"/></svg>
  <div class="t" style="left:1110px;top:22px;font-size:10.5px;color:#4584e0">products</div>
  <svg class="abs" style="left:1152px;top:15px" width="8" height="5" viewBox="0 0 8 5"><path d="M0 0h8L4 5z" fill="#222"/></svg>
  <div class="abs" style="left:1167.5px;top:6px;width:25px;height:25px;border-radius:50%;background:#1e8b3a;box-shadow:0 1px 3px rgba(0,0,0,.3)"></div>
  <div class="t" style="left:1175.5px;top:13.5px;font-size:11px;font-weight:bold;color:#fff">N</div>
</div>
<!-- layer panel -->
<div id="layer"><div class="hd"></div>
  <div class="t" style="left:12.5px;top:34px;font-size:13px;color:#555;-webkit-text-stroke:0.35px #555">Layer</div>
  <div class="plus" style="left:49.5px;top:29.5px"></div>
  <div class="t" style="left:180.7px;top:34px;font-size:13px;color:#555;-webkit-text-stroke:0.35px #555">Group</div>
  <div class="plus" style="left:221px;top:29.5px"></div>
</div>
<!-- toolbar -->
<div id="tools"></div>
<svg class="ico" style="left:274px;top:114px" width="13" height="13" viewBox="0 0 24 24"><path d="M5 15H3v4c0 1.1.9 2 2 2h4v-2H5v-4zM5 5h4V3H5c-1.1 0-2 .9-2 2v4h2V5zm14-2h-4v2h4v4h2V5c0-1.1-.9-2-2-2zm0 16h-4v2h4c1.1 0 2-.9 2-2v-4h-2v4zM12 9c-1.66 0-3 1.34-3 3s1.34 3 3 3 3-1.34 3-3-1.34-3-3-3z"/></svg>
<svg class="ico" style="left:300px;top:114px" width="13" height="13" viewBox="0 0 24 24"><path d="M19 8H5c-1.66 0-3 1.34-3 3v6h4v4h12v-4h4v-6c0-1.66-1.34-3-3-3zm-3 11H8v-5h8v5zm3-7c-.55 0-1-.45-1-1s.45-1 1-1 1 .45 1 1-.45 1-1 1zm-1-9H6v4h12V3z"/></svg>
<svg class="ico" style="left:326px;top:114px" width="13" height="13" viewBox="0 0 24 24"><circle cx="7" cy="5" r="2"/><circle cx="17" cy="5" r="2"/><path d="M5 8h4v3H5zM15 8h4v3h-4zM2 13h20v2H2zM2 17h3v5H2zM19 17h3v5h-3zM2 19h20v2H2z"/></svg>
<svg class="ico" style="left:353px;top:114px" width="13" height="13" viewBox="0 0 24 24"><path d="M21.99 4c0-1.1-.89-2-1.99-2H4c-1.1 0-2 .9-2 2v12c0 1.1.9 2 2 2h14l4 4-.01-18z"/><path fill="#9ec0ef" d="M5 5h14v10H5z"/></svg>
<div id="search"></div>
<div class="t" style="left:423.5px;top:115.5px;font-size:9.6px;color:#5b6e7f;letter-spacing:0.35px">Search</div>
<svg class="abs" style="left:479px;top:113px" width="14" height="14" viewBox="0 0 24 24"><path fill="#333" d="M15.5 14h-.79l-.28-.27C15.41 12.59 16 11.11 16 9.5 16 5.91 13.09 3 9.5 3S3 5.910 3 9.5 5.91 16 9.5 16c1.61 0 3.09-.59 4.23-1.57l.27.28v.79l5 4.99L20.49 19l-4.99-5zm-6 0C7.01 14 5 11.99 5 9.5S7.01 5 9.5 5 14 7.01 14 9.5 11.99 14 9.5 14z"/></svg>
<!-- zoom control -->
<div id="zoom">
  <div class="abs" style="left:0;top:23.5px;width:24px;height:1px;background:#e6e6e6"></div>
  <div class="abs" style="left:0;top:47.5px;width:24px;height:1px;background:#e6e6e6"></div>
  <div class="abs" style="left:7px;top:11px;width:10px;height:2px;background:#222"></div>
  <div class="abs" style="left:11px;top:7px;width:2px;height:10px;background:#222"></div>
  <div class="abs" style="left:7px;top:35px;width:10px;height:2px;background:#222"></div>
  <svg class="abs" style="left:8px;top:53px" width="8" height="14" viewBox="0 0 8 14"><path d="M4 0L8 7H0z" fill="#222"/><path d="M0 7h8L4 14z" fill="#bbb"/></svg>
</div>
<div class="t" style="left:41.3px;top:493.5px;font-size:11.5px;color:#2c5a85">Map Type</div>
<div class="abs" style="left:41.2px;top:512px;width:48px;height:48px;border:1.2px solid #2e5478;border-radius:6px;overflow:hidden;background:#aad3df">
<svg width="48" height="48" viewBox="41.2 512 48 48" style="position:absolute;left:-1.2px;top:-1.2px"><g transform="translate(8.951,487.280) scale(0.08969,0.14948)"><path d="M199.2,158.5 203.8,154.5 213.2,155.6 213.7,150.9 209.0,148.5 202.0,142.4 207.4,137.9 212.0,129.8 220.2,124.9 225.3,122.0 235.4,124.9 241.2,127.7 250.6,129.8 262.2,133.9 270.4,137.9 276.2,135.2 283.2,133.2 289.1,130.5 293.8,129.1 300.8,135.2 306.6,132.6 315.9,137.9 324.1,142.4 334.6,144.2 341.6,141.1 348.6,144.2 358.0,145.5 362.6,144.9 367.3,142.4 370.8,134.6 372.0,120.6 375.5,113.0 379.0,131.2 383.7,137.9 388.3,143.0 391.8,133.9 400.0,133.9 401.6,141.1 397.7,153.3 391.8,153.3 389.5,164.6 383.7,167.3 376.7,173.5 372.0,182.4 370.4,191.8 375.0,198.5 380.2,200.6 386.0,203.6 393.0,208.1 399.3,208.6 399.5,216.9 403.5,223.4 406.5,221.5 407.5,211.0 411.7,204.8 412.2,196.3 409.4,188.1 410.5,180.0 417.5,176.1 424.5,181.5 428.5,189.5 432.7,194.0 438.5,188.1 441.3,185.8 444.4,194.0 447.9,202.7 451.4,208.1 457.9,213.8 461.2,219.6 458.4,223.0 451.4,227.1 442.0,227.4 436.2,230.0 429.2,235.3 425.7,239.1 432.7,233.5 438.5,231.1 441.6,232.5 439.7,236.0 440.9,240.5 445.5,242.5 449.0,243.5 451.4,241.5 451.9,242.8 447.9,245.5 443.2,246.8 437.8,250.0 436.9,247.1 440.9,244.5 436.2,245.1 433.9,247.1 430.4,248.7 427.3,250.0 426.2,253.2 428.0,255.8 426.9,256.7 423.8,257.3 419.9,258.6 418.7,259.8 418.5,262.2 416.4,264.9 415.2,266.7 414.0,270.3 415.0,273.5 415.2,275.5 412.9,276.6 409.8,278.6 407.0,280.8 403.5,283.3 401.9,285.8 401.4,289.1 403.3,294.2 404.7,298.4 404.2,301.5 402.8,302.8 401.6,301.8 400.0,298.9 398.4,295.8 398.1,292.6 395.8,290.2 394.2,289.9 391.8,290.7 389.5,288.8 386.0,288.3 383.0,289.4 382.5,292.3 380.2,292.1 377.8,291.2 372.5,290.7 369.7,291.8 366.1,294.4 364.3,297.1 364.5,300.7 363.3,305.6 363.1,310.2 364.5,313.7 367.1,317.7 370.1,319.4 373.2,319.7 377.8,319.4 379.7,317.5 380.4,313.7 382.5,312.5 388.3,312.0 387.2,315.0 386.5,319.4 385.3,321.9 384.8,325.5 387.2,326.0 393.0,325.8 397.0,328.0 396.3,332.8 396.0,336.4 397.0,338.7 400.5,342.3 403.5,342.1 405.8,341.1 408.9,341.6 410.8,343.0 412.2,343.2 414.0,341.3 415.2,338.7 416.8,337.6 419.9,336.8 422.9,335.4 425.0,334.2 423.8,336.8 424.5,339.2 425.7,340.4 425.0,337.6 428.0,336.1 429.2,336.6 432.2,338.5 436.2,338.5 440.9,339.5 445.5,338.5 447.2,338.3 446.2,339.9 449.0,343.2 451.4,343.9 453.7,345.8 456.1,347.5 458.4,349.4 463.1,349.6 465.9,350.1 470.1,352.2 471.7,354.1 472.4,356.4 474.7,359.2 475.0,362.2 473.6,363.6 478.2,365.3 480.6,364.8 486.4,366.4 488.7,369.0 493.4,369.9 498.1,370.2 501.6,372.0 505.1,374.6 508.6,375.3 509.8,378.6 510.2,382.1 509.3,385.2 506.5,388.1 504.4,390.4 501.6,394.0 500.4,397.6 500.4,402.5 499.3,406.1 498.1,410.6 495.8,415.1 493.4,418.4 488.7,418.6 485.2,420.6 482.2,421.9 479.4,424.5 478.0,427.6 478.0,432.1 475.4,435.0 473.1,439.1 470.1,442.9 466.8,447.1 464.2,450.2 460.7,450.5 457.2,449.3 454.9,448.8 457.7,453.0 459.1,455.4 457.2,459.8 453.7,461.6 447.9,462.5 446.0,461.9 446.0,466.1 443.2,469.2 439.7,468.5 442.0,472.9 440.9,474.2 439.0,479.7 436.2,482.0 433.6,485.7 437.4,490.8 433.9,495.0 432.0,499.7 430.4,504.2 431.8,507.2 431.5,508.7 433.9,511.8 439.2,516.6 436.2,517.8 434.3,519.9 430.4,519.5 425.7,517.8 422.2,513.0 418.7,508.0 415.7,498.6 415.2,491.5 416.4,486.3 418.0,479.7 419.2,475.8 418.2,471.7 419.4,467.0 419.9,461.0 419.6,457.1 421.7,452.2 423.4,447.9 424.3,444.6 424.5,437.7 425.0,432.9 426.2,428.9 426.9,423.7 427.3,418.6 427.6,412.3 427.3,407.4 424.5,404.4 419.9,402.0 415.9,399.6 413.3,395.9 411.2,391.6 408.2,385.7 405.8,381.0 402.6,377.4 401.6,374.2 404.0,371.3 404.7,369.2 402.6,368.5 403.5,365.3 404.7,362.0 407.0,360.4 408.2,357.6 410.5,354.5 411.0,350.5 409.8,346.5 408.4,344.2 405.8,342.5 404.2,343.9 403.7,346.3 401.2,345.4 398.8,344.2 396.3,343.2 393.0,340.4 391.1,338.7 389.5,335.2 387.2,332.8 384.8,332.3 381.3,331.1 377.8,330.4 375.5,328.9 373.2,326.8 369.7,325.3 366.1,326.3 361.5,324.8 358.0,323.3 354.5,321.6 349.8,319.9 346.8,317.5 345.1,314.7 345.6,312.0 344.7,309.2 343.0,307.7 340.5,304.4 338.1,302.3 336.0,300.5 334.6,297.9 332.5,295.5 330.0,292.6 328.1,289.1 326.4,286.4 323.4,285.0 323.9,288.6 326.4,292.6 328.6,296.6 331.1,300.5 333.0,303.6 334.2,305.4 335.8,307.4 334.9,308.4 333.9,306.9 331.1,304.4 329.5,301.8 327.6,299.2 324.6,296.6 324.8,294.4 322.5,290.4 319.9,287.2 319.0,284.7 317.8,282.5 316.4,280.0 314.8,278.9 312.4,277.8 309.9,277.2 309.2,274.6 306.8,271.4 305.4,268.8 304.3,267.0 302.4,263.4 301.2,260.4 301.5,255.8 300.8,252.6 301.7,247.1 302.2,241.5 300.3,234.2 304.3,234.2 300.8,230.0 298.4,227.1 294.9,225.2 292.6,222.6 291.4,218.8 287.9,213.0 286.7,209.0 283.7,204.8 279.7,199.7 277.9,195.4 273.9,194.9 270.4,193.1 265.7,189.0 261.1,187.2 256.4,187.2 251.7,184.8 247.1,183.4 242.4,188.1 237.7,190.9 236.5,186.3 241.2,181.5 235.4,185.3 233.0,190.4 231.4,195.4 227.2,199.3 223.0,203.6 219.0,206.5 214.4,208.1 209.7,210.2 206.7,211.4 212.0,208.1 216.7,204.8 220.7,200.6 223.7,196.3 224.2,192.7 221.4,192.7 217.9,193.6 213.2,191.8 212.0,187.2 207.4,184.8 205.7,180.0 206.2,175.0 208.5,171.5 215.5,169.9 216.0,165.1 212.0,164.6 206.2,164.6 202.7,162.9 199.2,158.5ZM1039.9,158.5 1044.5,154.5 1053.9,155.6 1054.3,150.9 1049.7,148.5 1042.7,142.4 1048.0,137.9 1052.7,129.8 1060.9,124.9 1066.0,122.0 1076.1,124.9 1081.9,127.7 1091.2,129.8 1102.9,133.9 1111.1,137.9 1116.9,135.2 1123.9,133.2 1129.8,130.5 1134.4,129.1 1141.5,135.2 1147.3,132.6 1156.6,137.9 1164.8,142.4 1175.3,144.2 1182.3,141.1 1189.3,144.2 1198.7,145.5 1203.3,144.9 1208.0,142.4 1211.5,134.6 1212.7,120.6 1216.2,113.0 1219.7,131.2 1224.4,137.9 1229.0,143.0 1232.5,133.9 1240.7,133.9 1242.3,141.1 1238.4,153.3 1232.5,153.3 1230.2,164.6 1224.4,167.3 1217.3,173.5 1212.7,182.4 1211.0,191.8 1215.7,198.5 1220.9,200.6 1226.7,203.6 1233.7,208.1 1240.0,208.6 1240.2,216.9 1244.2,223.4 1247.2,221.5 1248.2,211.0 1252.4,204.8 1252.8,196.3 1250.0,188.1 1251.2,180.0 1258.2,176.1 1265.2,181.5 1269.2,189.5 1273.4,194.0 1279.2,188.1 1282.0,185.8 1285.1,194.0 1288.6,202.7 1292.1,208.1 1298.6,213.8 1301.9,219.6 1299.1,223.0 1292.1,227.1 1282.7,227.4 1276.9,230.0 1269.9,235.3 1266.4,239.1 1273.4,233.5 1279.2,231.1 1282.3,232.5 1280.4,236.0 1281.6,240.5 1286.2,242.5 1289.7,243.5 1292.1,241.5 1292.5,242.8 1288.6,245.5 1283.9,246.8 1278.5,250.0 1277.6,247.1 1281.6,244.5 1276.9,245.1 1274.6,247.1 1271.1,248.7 1268.0,250.0 1266.9,253.2 1268.7,255.8 1267.6,256.7 1264.5,257.3 1260.5,258.6 1259.4,259.8 1259.1,262.2 1257.0,264.9 1255.9,266.7 1254.7,270.3 1255.6,273.5 1255.9,275.5 1253.5,276.6 1250.5,278.6 1247.7,280.8 1244.2,283.3 1242.6,285.8 1242.1,289.1 1244.0,294.2 1245.4,298.4 1244.9,301.5 1243.5,302.8 1242.3,301.8 1240.7,298.9 1239.1,295.8 1238.8,292.6 1236.5,290.2 1234.9,289.9 1232.5,290.7 1230.2,288.8 1226.7,288.3 1223.7,289.4 1223.2,292.3 1220.9,292.1 1218.5,291.2 1213.1,290.7 1210.3,291.8 1206.8,294.4 1205.0,297.1 1205.2,300.7 1204.0,305.6 1203.8,310.2 1205.2,313.7 1207.8,317.7 1210.8,319.4 1213.8,319.7 1218.5,319.4 1220.4,317.5 1221.1,313.7 1223.2,312.5 1229.0,312.0 1227.9,315.0 1227.2,319.4 1226.0,321.9 1225.5,325.5 1227.9,326.0 1233.7,325.8 1237.7,328.0 1237.0,332.8 1236.7,336.4 1237.7,338.7 1241.2,342.3 1244.2,342.1 1246.5,341.1 1249.6,341.6 1251.4,343.0 1252.8,343.2 1254.7,341.3 1255.9,338.7 1257.5,337.6 1260.5,336.8 1263.6,335.4 1265.7,334.2 1264.5,336.8 1265.2,339.2 1266.4,340.4 1265.7,337.6 1268.7,336.1 1269.9,336.6 1272.9,338.5 1276.9,338.5 1281.6,339.5 1286.2,338.5 1287.9,338.3 1286.9,339.9 1289.7,343.2 1292.1,343.9 1294.4,345.8 1296.7,347.5 1299.1,349.4 1303.8,349.6 1306.6,350.1 1310.8,352.2 1312.4,354.1 1313.1,356.4 1315.4,359.2 1315.7,362.2 1314.3,363.6 1318.9,365.3 1321.3,364.8 1327.1,366.4 1329.4,369.0 1334.1,369.9 1338.8,370.2 1342.3,372.0 1345.8,374.6 1349.3,375.3 1350.5,378.6 1350.9,382.1 1350.0,385.2 1347.2,388.1 1345.1,390.4 1342.3,394.0 1341.1,397.6 1341.1,402.5 1339.9,406.1 1338.8,410.6 1336.4,415.1 1334.1,418.4 1329.4,418.6 1325.9,420.6 1322.9,421.9 1320.1,424.5 1318.7,427.6 1318.7,432.1 1316.1,435.0 1313.8,439.1 1310.8,442.9 1307.5,447.1 1304.9,450.2 1301.4,450.5 1297.9,449.3 1295.6,448.8 1298.4,453.0 1299.8,455.4 1297.9,459.8 1294.4,461.6 1288.6,462.5 1286.7,461.9 1286.7,466.1 1283.9,469.2 1280.4,468.5 1282.7,472.9 1281.6,474.2 1279.7,479.7 1276.9,482.0 1274.3,485.7 1278.1,490.8 1274.6,495.0 1272.7,499.7 1271.1,504.2 1272.5,507.2 1272.2,508.7 1274.6,511.8 1279.9,516.6 1276.9,517.8 1275.0,519.9 1271.1,519.5 1266.4,517.8 1262.9,513.0 1259.4,508.0 1256.3,498.6 1255.9,491.5 1257.0,486.3 1258.7,479.7 1259.8,475.8 1258.9,471.7 1260.1,467.0 1260.5,461.0 1260.3,457.1 1262.4,452.2 1264.1,447.9 1265.0,444.6 1265.2,437.7 1265.7,432.9 1266.9,428.9 1267.6,423.7 1268.0,418.6 1268.3,412.3 1268.0,407.4 1265.2,404.4 1260.5,402.0 1256.6,399.6 1254.0,395.9 1251.9,391.6 1248.9,385.7 1246.5,381.0 1243.3,377.4 1242.3,374.2 1244.7,371.3 1245.4,369.2 1243.3,368.5 1244.2,365.3 1245.4,362.0 1247.7,360.4 1248.9,357.6 1251.2,354.5 1251.7,350.5 1250.5,346.5 1249.1,344.2 1246.5,342.5 1244.9,343.9 1244.4,346.3 1241.9,345.4 1239.5,344.2 1237.0,343.2 1233.7,340.4 1231.8,338.7 1230.2,335.2 1227.9,332.8 1225.5,332.3 1222.0,331.1 1218.5,330.4 1216.2,328.9 1213.8,326.8 1210.3,325.3 1206.8,326.3 1202.2,324.8 1198.7,323.3 1195.2,321.6 1190.5,319.9 1187.5,317.5 1185.8,314.7 1186.3,312.0 1185.4,309.2 1183.7,307.7 1181.2,304.4 1178.8,302.3 1176.7,300.5 1175.3,297.9 1173.2,295.5 1170.6,292.6 1168.8,289.1 1167.1,286.4 1164.1,285.0 1164.6,288.6 1167.1,292.6 1169.2,296.6 1171.8,300.5 1173.7,303.6 1174.8,305.4 1176.5,307.4 1175.5,308.4 1174.6,306.9 1171.8,304.4 1170.2,301.8 1168.3,299.2 1165.3,296.6 1165.5,294.4 1163.2,290.4 1160.6,287.2 1159.7,284.7 1158.5,282.5 1157.1,280.0 1155.5,278.9 1153.1,277.8 1150.6,277.2 1149.9,274.6 1147.5,271.4 1146.1,268.8 1145.0,267.0 1143.1,263.4 1141.9,260.4 1142.2,255.8 1141.5,252.6 1142.4,247.1 1142.9,241.5 1141.0,234.2 1145.0,234.2 1141.5,230.0 1139.1,227.1 1135.6,225.2 1133.3,222.6 1132.1,218.8 1128.6,213.0 1127.4,209.0 1124.4,204.8 1120.4,199.7 1118.6,195.4 1114.6,194.9 1111.1,193.1 1106.4,189.0 1101.8,187.2 1097.1,187.2 1092.4,184.8 1087.7,183.4 1083.1,188.1 1078.4,190.9 1077.2,186.3 1081.9,181.5 1076.1,185.3 1073.7,190.4 1072.1,195.4 1067.9,199.3 1063.7,203.6 1059.7,206.5 1055.0,208.1 1050.4,210.2 1047.3,211.4 1052.7,208.1 1057.4,204.8 1061.4,200.6 1064.4,196.3 1064.9,192.7 1062.1,192.7 1058.6,193.6 1053.9,191.8 1052.7,187.2 1048.0,184.8 1046.4,180.0 1046.9,175.0 1049.2,171.5 1056.2,169.9 1056.7,165.1 1052.7,164.6 1046.9,164.6 1043.4,162.9 1039.9,158.5ZM489.2,188.1 482.9,183.4 478.2,180.0 473.6,173.5 470.8,166.2 468.9,159.0 466.6,153.3 467.7,144.2 472.4,137.9 464.2,132.6 468.9,125.6 461.9,120.6 463.1,110.7 458.4,100.8 454.9,87.5 451.4,72.8 521.4,-31.1 556.5,23.3 549.5,72.8 546.0,87.5 541.3,96.5 543.6,107.5 539.0,114.6 540.1,124.2 533.1,127.7 536.6,132.6 528.4,141.1 517.9,144.2 510.9,153.3 503.9,157.9 499.3,161.8 496.9,168.3 494.6,175.0 491.6,182.4 489.2,188.1ZM447.9,152.7 443.2,161.8 438.5,169.9 432.7,175.0 425.7,169.9 419.9,164.6 412.9,166.2 409.4,162.9 417.5,159.0 421.0,151.5 419.9,143.0 412.9,135.9 407.0,131.2 396.5,131.2 389.5,129.8 382.5,120.6 380.2,105.0 390.7,102.5 404.7,103.4 412.9,110.7 423.4,120.6 431.5,129.8 435.0,137.9 440.9,147.3 447.9,152.7ZM317.1,137.9 326.4,139.2 339.3,139.2 347.5,142.4 354.5,134.6 355.6,127.7 347.5,122.0 341.6,109.1 332.3,111.5 325.3,106.7 314.8,113.0 313.6,122.8 317.1,127.7 314.8,132.6 317.1,137.9ZM1157.8,137.9 1167.1,139.2 1180.0,139.2 1188.2,142.4 1195.2,134.6 1196.3,127.7 1188.2,122.0 1182.3,109.1 1173.0,111.5 1166.0,106.7 1155.5,113.0 1154.3,122.8 1157.8,127.7 1155.5,132.6 1157.8,137.9ZM299.6,120.6 304.3,122.8 311.3,118.3 312.4,100.8 301.9,97.4 297.7,105.0 299.6,120.6ZM1140.3,120.6 1145.0,122.8 1152.0,118.3 1153.1,100.8 1142.6,97.4 1138.4,105.0 1140.3,120.6ZM365.0,102.5 374.3,116.8 381.3,102.5 369.7,95.7 365.0,102.5ZM354.5,118.3 363.8,120.6 366.1,110.7 362.6,102.5 354.5,106.7 354.5,118.3ZM1195.2,118.3 1204.5,120.6 1206.8,110.7 1203.3,102.5 1195.2,106.7 1195.2,118.3ZM376.7,96.5 404.7,96.5 404.7,82.8 376.7,82.8ZM318.3,99.1 346.3,96.5 346.3,82.8 318.3,82.8ZM1159.0,99.1 1187.0,96.5 1187.0,82.8 1159.0,82.8ZM389.5,167.3 397.7,167.3 403.5,169.9 401.2,164.6 393.0,158.5 387.2,161.8 389.5,167.3ZM453.0,236.7 454.9,231.8 457.2,226.0 461.7,222.3 461.9,228.2 465.4,230.0 467.7,233.5 468.4,237.0 466.6,239.8 464.2,237.0 460.7,236.7 453.0,236.7ZM393.0,311.0 396.5,308.4 400.0,307.7 404.7,307.9 410.5,311.0 415.2,313.0 418.2,315.2 415.2,316.0 410.5,316.0 409.8,314.0 407.0,312.0 402.3,311.2 398.8,310.7 395.3,311.0 393.0,311.0ZM417.5,319.7 421.0,316.0 428.0,316.2 432.0,319.2 428.0,320.2 424.5,321.6 421.5,320.2 417.8,320.4 417.5,319.7ZM408.4,319.7 413.6,320.2 412.2,321.1 409.4,320.4ZM434.6,319.4 438.3,319.7 437.8,320.7 434.6,320.7ZM540.1,168.3 535.5,162.9 540.1,160.7 534.3,157.9 539.0,153.9 544.8,155.6 549.5,155.1 554.1,153.3 557.6,154.5 560.0,160.7 556.5,165.7 548.3,170.4 540.1,168.3ZM-223.0,191.3 -225.8,191.8 -229.3,195.4 -232.8,196.3 -236.1,192.7 -237.0,188.1 -237.5,182.4 -237.5,177.6 -234.0,174.0 -230.5,170.4 -225.8,167.3 -223.5,162.9 -220.0,157.3 -217.7,151.5 -214.2,144.2 -216.5,141.7 -211.8,137.9 -208.3,134.6 -204.8,131.2 -200.1,129.8 -195.5,126.3 -188.9,123.5 -183.8,124.2 -178.0,128.4 -176.8,132.6 -172.1,135.2 -167.5,136.6 -161.6,139.8 -155.8,144.2 -153.0,148.5 -153.4,153.9 -147.6,155.1 -146.4,147.3 -147.6,140.5 -141.8,143.0 -138.3,146.7 -134.8,144.9 -124.3,140.5 -121.9,143.0 -114.9,140.5 -110.2,141.1 -107.9,132.6 -99.7,135.2 -93.9,137.9 -91.6,127.7 -93.2,122.8 -89.2,113.0 -86.9,109.1 -81.1,110.7 -79.2,116.8 -81.1,124.2 -79.9,134.6 -79.9,151.5 -76.4,149.1 -70.5,147.3 -65.9,150.3 -67.0,144.2 -71.7,141.1 -74.0,134.6 -75.2,124.2 -75.2,113.0 -71.7,116.8 -67.0,114.6 -63.5,116.8 -60.0,119.8 -61.2,113.0 -60.0,105.0 -50.7,105.0 -47.2,96.5 -43.7,92.1 -27.3,82.8 -15.7,77.9 -6.3,65.3 -1.7,77.9 -5.2,92.1 -1.7,100.8 3.0,105.0 7.7,102.5 12.4,105.0 15.9,106.7 26.4,105.0 38.0,105.0 46.2,105.0 50.9,113.0 53.2,120.6 57.9,125.6 63.7,120.6 71.9,120.6 76.6,115.3 80.1,111.5 91.8,114.6 101.1,119.8 106.9,124.9 112.8,124.2 119.8,125.6 124.4,131.2 128.0,133.9 133.8,133.2 142.0,133.9 147.8,130.5 153.6,131.9 161.8,132.6 171.2,137.9 179.3,141.1 185.2,147.3 191.0,153.3 195.2,155.6 191.0,159.0 188.7,162.9 186.3,165.7 178.2,164.0 173.5,161.8 168.8,164.6 165.3,163.5 167.7,169.9 170.0,175.0 164.1,174.5 157.1,178.5 152.5,182.4 149.0,187.2 140.8,187.2 136.1,188.1 132.6,189.5 131.5,196.3 130.3,202.7 128.4,206.9 124.4,212.2 120.9,217.3 116.7,224.5 114.9,218.8 114.4,211.0 114.9,202.7 117.0,197.6 120.9,196.3 124.4,190.9 128.0,185.8 130.3,182.4 125.6,179.0 123.3,181.5 117.4,179.5 112.8,189.5 105.8,191.8 102.3,189.0 97.6,190.4 90.6,190.0 84.8,190.4 81.2,194.0 76.6,198.5 71.9,203.6 68.4,209.0 70.7,213.0 76.6,212.2 78.9,215.7 81.0,220.0 78.9,228.2 78.2,233.5 74.2,238.7 70.7,243.8 67.2,248.7 62.6,252.6 59.1,251.3 56.3,253.6 53.7,258.3 49.7,261.3 50.9,265.8 53.0,270.3 53.0,274.6 51.6,276.1 48.6,276.9 45.8,277.2 46.2,273.2 46.2,269.7 45.5,267.9 42.7,267.3 43.2,263.1 41.1,261.6 38.0,262.2 35.0,264.3 33.8,262.8 35.7,259.8 33.4,258.6 29.9,261.3 26.4,263.7 25.4,265.5 27.5,267.9 29.2,269.7 32.9,268.2 36.9,269.1 34.5,270.9 32.2,272.9 29.4,276.1 31.5,278.0 32.9,282.2 34.5,284.5 35.5,287.2 34.5,288.3 35.7,290.4 34.5,293.9 32.2,297.1 30.6,299.7 29.4,302.3 26.8,304.4 24.0,306.7 21.7,308.4 18.9,309.2 17.5,310.0 15.4,310.2 12.4,311.2 10.0,312.0 8.4,313.2 8.2,315.0 7.0,313.2 5.4,311.7 3.0,312.0 0.2,313.7 -1.7,315.7 -2.4,318.7 -0.5,321.9 1.8,324.3 4.2,327.2 5.8,330.9 6.1,335.2 4.9,337.1 1.8,338.7 -0.5,340.4 -3.3,342.8 -4.5,343.2 -4.0,340.2 -5.2,338.7 -7.5,338.5 -9.6,335.2 -12.2,333.5 -13.6,331.8 -15.7,331.8 -15.9,334.0 -17.3,338.7 -17.5,341.8 -15.0,343.9 -14.5,346.5 -12.2,347.2 -9.8,349.4 -7.7,352.2 -7.7,355.2 -6.6,357.6 -5.9,360.1 -7.5,360.4 -9.4,359.0 -12.6,356.6 -14.0,354.3 -15.0,351.2 -15.2,348.2 -18.0,344.9 -19.6,344.2 -18.9,340.4 -18.9,336.4 -19.4,332.8 -21.0,326.8 -21.7,324.3 -24.5,323.6 -26.6,326.0 -28.3,324.8 -29.2,321.1 -30.8,317.5 -32.5,314.5 -34.3,312.0 -35.5,308.7 -37.9,310.7 -40.2,311.2 -42.5,311.5 -46.0,312.5 -47.2,315.2 -50.7,317.2 -53.0,319.9 -56.5,323.1 -58.9,325.1 -61.7,327.2 -61.9,331.6 -62.8,336.4 -62.8,339.2 -64.7,341.6 -66.6,342.8 -68.2,344.4 -70.3,342.5 -71.7,338.7 -73.3,335.2 -75.2,330.4 -76.8,326.5 -78.2,321.9 -79.2,318.2 -79.2,314.5 -79.7,312.0 -80.6,313.2 -83.4,313.7 -85.7,312.0 -88.1,310.0 -85.3,308.7 -88.5,307.7 -89.9,306.4 -92.0,304.4 -93.9,302.0 -98.6,302.6 -104.4,302.8 -110.2,302.0 -114.9,301.0 -116.1,298.4 -117.9,297.4 -117.7,299.7 -117.2,304.4 -114.9,306.2 -111.9,306.9 -109.5,309.5 -111.4,313.2 -113.3,314.7 -114.2,318.2 -117.2,319.9 -120.8,322.4 -125.4,324.1 -127.8,326.3 -132.4,328.0 -135.9,330.4 -140.6,331.8 -144.1,333.3 -147.6,333.7 -148.1,335.6 -145.3,339.0 -140.6,338.3 -135.9,337.1 -131.3,335.6 -129.4,335.6 -129.9,338.7 -130.6,341.1 -132.4,344.7 -134.8,349.4 -137.1,352.9 -140.6,356.9 -143.4,358.7 -147.6,361.8 -151.1,365.3 -153.4,368.1 -155.8,370.4 -156.9,373.9 -158.3,377.4 -157.4,379.8 -156.9,383.3 -155.8,387.3 -154.6,391.6 -154.4,397.6 -155.3,400.0 -158.1,403.7 -162.8,406.1 -167.0,409.8 -167.9,412.3 -166.3,416.1 -166.3,420.6 -168.6,423.0 -172.1,425.0 -173.1,426.3 -172.6,430.2 -173.8,433.4 -176.8,436.6 -179.1,440.4 -182.6,443.7 -186.1,446.5 -189.4,447.9 -193.1,448.2 -196.6,447.9 -202.5,450.2 -205.3,448.8 -206.2,448.5 -206.5,445.1 -207.6,442.3 -209.0,438.2 -210.7,433.1 -213.0,428.9 -214.2,426.3 -215.3,418.6 -216.5,414.8 -218.4,411.1 -221.2,406.1 -221.6,403.7 -220.7,397.6 -217.7,392.8 -217.0,389.2 -218.4,384.5 -220.0,378.6 -220.7,376.3 -222.3,373.9 -224.7,370.4 -227.5,366.9 -227.5,363.4 -227.0,360.6 -226.3,357.6 -226.8,354.5 -228.4,352.9 -230.5,352.9 -232.8,353.1 -235.2,353.3 -237.5,350.5 -239.4,348.7 -242.2,348.4 -245.7,348.9 -249.2,350.3 -252.7,351.7 -255.0,352.2 -258.5,351.2 -262.0,351.5 -266.7,353.1 -270.2,351.7 -273.7,349.1 -276.0,347.2 -278.4,345.8 -280.0,343.5 -280.7,341.1 -283.1,338.7 -284.7,337.6 -287.3,335.6 -288.2,334.0 -288.4,331.6 -290.1,328.7 -288.9,326.8 -287.7,324.8 -287.0,321.9 -286.6,319.4 -287.7,317.0 -289.1,313.7 -287.7,310.7 -286.6,306.9 -284.2,304.4 -283.1,300.2 -280.0,296.6 -276.0,294.7 -272.5,292.1 -272.1,288.6 -271.6,285.8 -270.2,283.1 -267.9,280.6 -265.1,278.6 -263.7,275.2 -262.7,273.8 -262.3,273.2 -263.9,271.4 -264.4,270.6 -266.5,269.7 -269.0,270.0 -270.2,270.3 -269.7,266.7 -271.4,265.2 -270.2,262.8 -269.7,259.8 -269.7,256.7 -270.0,253.6 -270.9,252.0 -268.6,250.4 -266.7,249.7 -262.0,250.4 -257.4,250.4 -253.4,250.7 -252.2,247.1 -252.0,242.8 -253.9,238.7 -256.2,237.0 -259.7,236.0 -260.4,233.9 -257.4,232.5 -253.9,233.2 -252.7,232.8 -253.4,229.3 -251.5,230.3 -248.7,230.0 -246.9,228.2 -245.5,226.7 -244.8,224.5 -242.2,223.4 -240.3,222.3 -238.7,219.6 -238.0,217.3 -236.3,215.7 -232.8,214.6 -230.5,214.6 -229.1,213.4 -228.9,211.0 -229.8,208.1 -230.3,206.9 -230.0,202.7 -229.8,201.0 -227.0,200.2 -224.4,197.6 -221.4,197.6 -223.0,191.3ZM617.7,191.3 614.9,191.8 611.3,195.4 607.8,196.3 604.6,192.7 603.6,188.1 603.2,182.4 603.2,177.6 606.7,174.0 610.2,170.4 614.9,167.3 617.2,162.9 620.7,157.3 623.0,151.5 626.5,144.2 624.2,141.7 628.9,137.9 632.4,134.6 635.9,131.2 640.5,129.8 645.2,126.3 651.7,123.5 656.9,124.2 662.7,128.4 663.9,132.6 668.6,135.2 673.2,136.6 679.1,139.8 684.9,144.2 687.7,148.5 687.2,153.9 693.1,155.1 694.3,147.3 693.1,140.5 698.9,143.0 702.4,146.7 705.9,144.9 716.4,140.5 718.8,143.0 725.8,140.5 730.4,141.1 732.8,132.6 741.0,135.2 746.8,137.9 749.1,127.7 747.5,122.8 751.5,113.0 753.8,109.1 759.6,110.7 761.5,116.8 759.6,124.2 760.8,134.6 760.8,151.5 764.3,149.1 770.1,147.3 774.8,150.3 773.6,144.2 769.0,141.1 766.6,134.6 765.5,124.2 765.5,113.0 769.0,116.8 773.6,114.6 777.2,116.8 780.7,119.8 779.5,113.0 780.7,105.0 790.0,105.0 793.5,96.5 797.0,92.1 813.3,82.8 825.0,77.9 834.4,65.3 839.0,77.9 835.5,92.1 839.0,100.8 843.7,105.0 848.4,102.5 853.0,105.0 856.6,106.7 867.1,105.0 878.7,105.0 886.9,105.0 891.6,113.0 893.9,120.6 898.6,125.6 904.4,120.6 912.6,120.6 917.3,115.3 920.8,111.5 932.4,114.6 941.8,119.8 947.6,124.9 953.5,124.2 960.5,125.6 965.1,131.2 968.6,133.9 974.5,133.2 982.7,133.9 988.5,130.5 994.3,131.9 1002.5,132.6 1011.8,137.9 1020.0,141.1 1025.9,147.3 1031.7,153.3 1035.9,155.6 1031.7,159.0 1029.4,162.9 1027.0,165.7 1018.9,164.0 1014.2,161.8 1009.5,164.6 1006.0,163.5 1008.3,169.9 1010.7,175.0 1004.8,174.5 997.8,178.5 993.2,182.4 989.7,187.2 981.5,187.2 976.8,188.1 973.3,189.5 972.1,196.3 971.0,202.7 969.1,206.9 965.1,212.2 961.6,217.3 957.4,224.5 955.6,218.8 955.1,211.0 955.6,202.7 957.7,197.6 961.6,196.3 965.1,190.9 968.6,185.8 971.0,182.4 966.3,179.0 964.0,181.5 958.1,179.5 953.5,189.5 946.5,191.8 943.0,189.0 938.3,190.4 931.3,190.0 925.4,190.4 921.9,194.0 917.3,198.5 912.6,203.6 909.1,209.0 911.4,213.0 917.3,212.2 919.6,215.7 921.7,220.0 919.6,228.2 918.9,233.5 914.9,238.7 911.4,243.8 907.9,248.7 903.3,252.6 899.8,251.3 897.0,253.6 894.4,258.3 890.4,261.3 891.6,265.8 893.7,270.3 893.7,274.6 892.3,276.1 889.2,276.9 886.4,277.2 886.9,273.2 886.9,269.7 886.2,267.9 883.4,267.3 883.9,263.1 881.8,261.6 878.7,262.2 875.7,264.3 874.5,262.8 876.4,259.8 874.1,258.6 870.6,261.3 867.1,263.7 866.1,265.5 868.2,267.9 869.9,269.7 873.6,268.2 877.6,269.1 875.2,270.9 872.9,272.9 870.1,276.1 872.2,278.0 873.6,282.2 875.2,284.5 876.2,287.2 875.2,288.3 876.4,290.4 875.2,293.9 872.9,297.1 871.3,299.7 870.1,302.3 867.5,304.4 864.7,306.7 862.4,308.4 859.6,309.2 858.2,310.0 856.1,310.2 853.0,311.2 850.7,312.0 849.1,313.2 848.8,315.0 847.7,313.2 846.0,311.7 843.7,312.0 840.9,313.7 839.0,315.7 838.3,318.7 840.2,321.9 842.5,324.3 844.9,327.2 846.5,330.9 846.7,335.2 845.6,337.1 842.5,338.7 840.2,340.4 837.4,342.8 836.2,343.2 836.7,340.2 835.5,338.7 833.2,338.5 831.1,335.2 828.5,333.5 827.1,331.8 825.0,331.8 824.8,334.0 823.4,338.7 823.2,341.8 825.7,343.9 826.2,346.5 828.5,347.2 830.9,349.4 833.0,352.2 833.0,355.2 834.1,357.6 834.8,360.1 833.2,360.4 831.3,359.0 828.1,356.6 826.7,354.3 825.7,351.2 825.5,348.2 822.7,344.9 821.1,344.2 821.8,340.4 821.8,336.4 821.3,332.8 819.7,326.8 819.0,324.3 816.2,323.6 814.0,326.0 812.4,324.8 811.5,321.1 809.8,317.5 808.2,314.5 806.3,312.0 805.2,308.7 802.8,310.7 800.5,311.2 798.2,311.5 794.7,312.5 793.5,315.2 790.0,317.2 787.7,319.9 784.2,323.1 781.8,325.1 779.0,327.2 778.8,331.6 777.9,336.4 777.9,339.2 776.0,341.6 774.1,342.8 772.5,344.4 770.4,342.5 769.0,338.7 767.3,335.2 765.5,330.4 763.8,326.5 762.4,321.9 761.5,318.2 761.5,314.5 761.0,312.0 760.1,313.2 757.3,313.7 755.0,312.0 752.6,310.0 755.4,308.7 752.2,307.7 750.8,306.4 748.7,304.4 746.8,302.0 742.1,302.6 736.3,302.8 730.4,302.0 725.8,301.0 724.6,298.4 722.7,297.4 723.0,299.7 723.4,304.4 725.8,306.2 728.8,306.9 731.1,309.5 729.3,313.2 727.4,314.7 726.5,318.2 723.4,319.9 719.9,322.4 715.3,324.1 712.9,326.3 708.3,328.0 704.8,330.4 700.1,331.8 696.6,333.3 693.1,333.7 692.6,335.6 695.4,339.0 700.1,338.3 704.8,337.1 709.4,335.6 711.3,335.6 710.8,338.7 710.1,341.1 708.3,344.7 705.9,349.4 703.6,352.9 700.1,356.9 697.3,358.7 693.1,361.8 689.6,365.3 687.2,368.1 684.9,370.4 683.7,373.9 682.3,377.4 683.3,379.8 683.7,383.3 684.9,387.3 686.1,391.6 686.3,397.6 685.4,400.0 682.6,403.7 677.9,406.1 673.7,409.8 672.8,412.3 674.4,416.1 674.4,420.6 672.1,423.0 668.6,425.0 667.6,426.3 668.1,430.2 666.9,433.4 663.9,436.6 661.6,440.4 658.1,443.7 654.6,446.5 651.3,447.9 647.5,448.2 644.0,447.9 638.2,450.2 635.4,448.8 634.5,448.5 634.2,445.1 633.1,442.3 631.7,438.2 630.0,433.1 627.7,428.9 626.5,426.3 625.4,418.6 624.2,414.8 622.3,411.1 619.5,406.1 619.1,403.7 620.0,397.6 623.0,392.8 623.7,389.2 622.3,384.5 620.7,378.6 620.0,376.3 618.4,373.9 616.0,370.4 613.2,366.9 613.2,363.4 613.7,360.6 614.4,357.6 613.9,354.5 612.3,352.9 610.2,352.9 607.8,353.1 605.5,353.3 603.2,350.5 601.3,348.7 598.5,348.4 595.0,348.9 591.5,350.3 588.0,351.7 585.7,352.2 582.2,351.2 578.7,351.5 574.0,353.1 570.5,351.7 567.0,349.1 564.6,347.2 562.3,345.8 560.7,343.5 560.0,341.1 557.6,338.7 556.0,337.6 553.4,335.6 552.5,334.0 552.3,331.6 550.6,328.7 551.8,326.8 553.0,324.8 553.7,321.9 554.1,319.4 553.0,317.0 551.6,313.7 553.0,310.7 554.1,306.9 556.5,304.4 557.6,300.2 560.7,296.6 564.6,294.7 568.1,292.1 568.6,288.6 569.1,285.8 570.5,283.1 572.8,280.6 575.6,278.6 577.0,275.2 578.0,273.8 578.4,273.2 576.8,271.4 576.3,270.6 574.2,269.7 571.7,270.0 570.5,270.3 570.9,266.7 569.3,265.2 570.5,262.8 570.9,259.8 570.9,256.7 570.7,253.6 569.8,252.0 572.1,250.4 574.0,249.7 578.7,250.4 583.3,250.4 587.3,250.7 588.5,247.1 588.7,242.8 586.8,238.7 584.5,237.0 581.0,236.0 580.3,233.9 583.3,232.5 586.8,233.2 588.0,232.8 587.3,229.3 589.2,230.3 592.0,230.0 593.8,228.2 595.2,226.7 595.9,224.5 598.5,223.4 600.4,222.3 602.0,219.6 602.7,217.3 604.3,215.7 607.8,214.6 610.2,214.6 611.6,213.4 611.8,211.0 610.9,208.1 610.4,206.9 610.6,202.7 610.9,201.0 613.7,200.2 616.3,197.6 619.3,197.6 617.7,191.3ZM712.5,120.6 716.4,125.6 724.6,127.0 721.1,116.8 719.9,109.1 723.4,100.8 730.4,92.1 745.6,72.8 731.6,72.8 721.1,87.5 716.4,100.8 714.1,110.7ZM619.5,62.0 638.2,77.9 654.6,62.0 642.9,23.3 619.5,37.4ZM0.0,614.0 0.0,575.0 12.5,571.0 25.0,576.0 45.0,574.0 50.0,577.5 55.0,572.5 70.0,574.0 87.5,579.0 95.0,584.0 107.5,586.0 120.0,592.5 135.0,601.0 150.0,609.0 152.0,614.0ZM415.0,614.0 415.0,602.5 422.5,591.0 430.0,582.5 435.0,577.5 442.5,565.0 450.0,560.0 462.5,556.0 452.5,565.0 447.5,577.5 450.0,595.0 451.0,614.0ZM352.0,614.0 356.0,610.0 365.0,610.0 369.0,614.0ZM555.8,614.0 570.4,601.0 590.8,594.8 625.8,594.8 649.0,598.3 669.5,589.6 682.7,594.8 690.0,585.0 707.4,577.9 716.2,572.0 725.0,576.4 754.0,583.7 765.7,594.0 777.4,585.2 792.0,575.0 815.3,569.2 830.0,570.6 850.3,576.4 856.0,572.0 876.5,576.4 891.0,575.0 905.5,578.8 928.7,581.4 954.6,589.0 975.0,599.5 990.7,614.0Z" fill="#f2efe9"/><path d="M578.4,273.2 581.2,271.2 585.7,270.9 586.8,271.2 589.2,268.5 590.8,266.1 592.0,264.9 590.8,262.8 593.6,259.2 596.6,257.0 599.0,255.4 598.7,251.6 602.0,250.7 604.1,251.0 608.5,249.7 612.3,247.4 615.3,249.1 616.3,252.3 620.2,256.1 623.5,257.6 624.9,258.9 626.5,260.7 628.2,261.9 628.9,264.3 627.9,267.3 629.1,267.3 630.3,266.1 631.7,264.3 631.7,260.1 633.5,260.7 634.7,261.9 634.7,260.4 632.4,258.9 631.0,257.9 628.9,257.0 628.9,255.4 626.5,255.1 624.2,253.2 623.0,250.0 620.5,248.1 620.2,244.1 621.9,243.1 623.7,243.5 623.3,245.1 624.0,246.1 626.5,247.1 628.4,249.4 629.8,250.4 632.4,252.0 633.8,253.2 635.9,255.1 637.0,256.7 636.8,258.9 636.8,260.4 638.2,262.2 639.6,263.7 640.8,266.4 641.9,268.8 642.2,270.9 644.0,272.0 645.2,271.7 645.7,269.4 646.8,267.6 647.5,266.7 645.2,264.3 644.7,261.9 645.0,259.5 647.1,260.7 647.5,259.2 651.0,258.6 652.7,259.5 653.4,260.7 652.7,262.8 654.1,264.3 654.1,266.1 655.3,268.8 655.5,270.3 656.9,271.2 658.1,271.4 660.4,272.6 663.2,270.9 665.1,271.4 667.4,272.9 669.7,272.6 672.1,270.9 676.0,271.4 675.1,274.6 675.3,276.6 674.4,279.2 673.2,282.2 672.1,285.8 671.6,286.4 666.9,286.4 663.9,285.8 661.3,286.6 658.1,287.5 654.6,286.1 650.3,285.6 647.5,284.2 645.2,282.8 641.7,282.0 638.4,284.2 637.5,288.3 635.9,289.1 633.5,287.7 630.0,286.6 627.0,283.3 622.3,282.0 618.4,281.4 615.1,279.2 617.2,275.5 616.3,273.2 617.2,270.0 615.6,270.3 614.6,269.4 611.3,270.6 606.7,270.0 603.2,271.2 598.5,270.9 595.0,271.7 591.5,273.5 590.1,274.0 586.8,275.8 584.5,275.2 582.2,275.5 579.1,273.5ZM659.2,257.6 656.9,256.4 656.7,253.2 656.7,251.3 658.1,248.7 658.8,245.8 660.6,244.8 662.3,242.1 663.2,240.5 665.1,240.1 667.4,241.8 669.7,242.8 667.4,244.5 669.7,247.1 672.1,246.8 674.4,245.1 676.7,244.5 674.4,243.8 673.2,241.5 676.7,239.8 680.7,238.4 680.2,240.5 681.4,242.1 679.1,243.8 677.4,244.8 679.8,246.5 681.6,247.8 684.2,250.0 686.1,252.0 688.6,255.1 688.6,256.4 686.1,258.3 684.2,258.3 680.2,258.6 677.4,257.3 676.3,257.3 673.5,255.1 670.9,255.1 668.6,255.4 665.1,257.3 661.6,257.6 659.2,257.6ZM703.1,242.8 705.9,240.5 710.6,238.7 715.3,239.4 715.7,243.8 711.8,244.8 711.3,247.8 714.1,252.6 714.8,256.7 717.1,258.9 715.3,261.3 717.1,264.3 717.6,268.8 716.4,270.6 711.8,270.9 708.3,269.1 705.9,268.5 705.5,265.8 706.6,262.8 707.8,260.1 707.1,258.3 704.8,255.1 702.4,252.0 702.0,248.7 701.3,246.8 703.1,242.8ZM667.4,290.2 667.9,293.7 669.7,297.1 670.9,299.2 673.2,304.4 675.1,308.2 677.7,312.0 678.4,316.7 680.2,319.4 682.1,323.1 683.7,326.5 686.1,328.4 688.4,330.6 690.7,332.8 692.6,334.0 693.1,333.5 691.4,329.2 690.7,326.8 688.4,321.9 686.1,317.0 683.0,312.0 681.4,306.9 678.4,303.6 675.6,299.2 673.2,295.2 673.2,291.2 672.1,293.9 671.4,295.8 669.7,293.9 667.4,290.2ZM722.7,297.4 719.9,298.7 717.6,298.9 714.1,296.6 711.5,295.5 710.1,292.9 708.3,289.9 705.5,289.1 703.6,291.2 704.8,294.7 707.1,297.9 708.7,299.2 709.7,302.3 710.6,300.2 712.0,300.7 711.8,304.1 714.1,305.1 718.5,304.9 720.6,302.3 722.7,300.0ZM616.3,197.6 619.3,197.6 620.9,202.7 621.6,206.5 624.7,207.3 628.4,204.4 630.0,201.5 630.3,196.3 630.7,193.1 633.5,190.9 635.4,188.1 632.4,184.4 631.9,180.0 632.4,175.0 634.7,172.5 639.4,168.3 641.7,164.0 643.6,158.5 647.5,157.3 650.6,160.2 650.3,164.0 646.4,167.8 642.9,170.9 641.2,174.5 641.7,180.0 641.5,183.4 643.6,185.3 646.4,187.2 649.9,186.3 654.6,184.8 658.1,184.8 662.0,187.7 656.9,189.5 653.4,189.5 649.4,189.5 646.4,191.3 646.4,194.0 648.2,194.9 648.2,199.3 646.4,200.6 644.0,198.0 641.7,199.3 640.5,202.7 640.8,206.1 639.4,209.4 637.0,211.4 634.9,211.0 632.4,209.8 628.9,211.8 624.7,213.4 623.0,211.4 619.8,212.6 617.2,213.0 615.3,211.4 614.4,209.0 614.9,205.7 615.6,202.7 616.3,197.6ZM687.2,153.9 682.6,156.2 675.6,151.5 668.6,150.3 667.4,153.3 672.1,159.0 672.8,164.6 676.7,167.3 680.2,165.7 679.1,162.4 684.9,164.0 686.1,159.0 690.7,156.2 694.3,155.1 693.1,154.5ZM376.4,239.4 383.2,233.9 385.5,232.1 389.7,232.8 393.2,235.6 393.9,239.4 391.8,240.1 387.4,240.5 385.5,238.7 386.5,237.0 383.7,239.1 379.2,240.1ZM386.2,256.1 387.2,256.4 389.5,254.5 390.2,251.0 391.6,246.1 392.1,244.5 393.5,242.8 391.6,242.5 389.5,242.8 386.9,244.5 386.2,247.1 386.5,251.3 386.5,253.6ZM393.9,242.5 396.5,242.5 400.7,242.5 403.5,242.5 404.7,245.5 404.9,246.8 401.6,246.1 400.7,248.7 399.1,252.0 398.8,249.7 396.7,248.7 397.0,245.5 394.6,243.5ZM396.7,255.8 398.1,256.7 401.2,256.4 404.7,254.5 407.2,252.3 405.1,252.6 400.5,253.9 397.4,254.8ZM405.1,251.0 407.0,251.0 410.5,251.0 413.6,250.4 413.3,248.1 410.5,248.7 406.1,249.7ZM413.1,248.7 419.9,244.5 425.2,240.1 429.2,236.0 432.7,233.5 431.5,232.1 428.0,234.6 424.5,238.7 419.4,243.1 413.6,247.4ZM303.1,180.0 307.8,182.9 319.4,183.4 325.3,178.5 326.4,175.0 318.3,181.0 306.6,177.6ZM1143.8,180.0 1148.5,182.9 1160.1,183.4 1166.0,178.5 1167.1,175.0 1159.0,181.0 1147.3,177.6ZM299.6,161.8 306.6,162.9 313.6,159.0 310.1,151.5 303.1,154.5ZM1140.3,161.8 1147.3,162.9 1154.3,159.0 1150.8,151.5 1143.8,154.5ZM359.1,226.3 365.0,226.3 366.1,220.7 363.8,214.6 360.3,216.1 362.6,220.7ZM1199.8,226.3 1205.7,226.3 1206.8,220.7 1204.5,214.6 1201.0,216.1 1203.3,220.7ZM334.6,194.0 339.3,192.7 351.0,190.4 341.6,190.4ZM1175.3,194.0 1180.0,192.7 1191.7,190.4 1182.3,190.4ZM665.8,364.1 670.7,363.9 671.1,365.7 669.7,369.2 666.2,369.2 665.3,366.2ZM659.5,371.1 660.4,371.1 663.4,378.6 663.9,383.3 662.7,383.6 660.4,378.6 659.7,373.9ZM671.4,385.7 672.3,385.7 673.9,391.6 673.9,397.1 672.8,397.1 671.6,391.6ZM-0.5,222.6 4.2,216.9 6.5,206.9 5.4,206.1 1.8,215.0 -4.0,221.9 -5.6,222.6ZM840.2,222.6 844.9,216.9 847.2,206.9 846.0,206.1 842.5,215.0 836.7,221.9 835.1,222.6ZM728.1,242.1 735.1,240.5 734.0,245.5 730.4,248.1 727.6,245.5ZM764.3,240.5 771.3,239.8 776.0,240.8 774.8,242.1 766.6,242.5Z" fill="#aad3df"/><path d="M578.2,227.8 581.0,227.1 584.5,225.6 588.0,225.6 592.7,225.2 594.8,223.8 593.8,221.5 595.5,218.5 592.2,216.9 591.5,214.6 590.3,211.0 588.0,208.1 586.8,205.3 584.5,204.8 585.7,202.3 587.3,198.5 583.3,197.6 584.5,193.6 579.8,193.6 578.7,197.1 578.0,200.6 578.4,203.6 577.5,205.7 580.1,209.0 579.8,210.2 584.0,209.8 583.8,212.2 584.5,215.4 581.7,216.1 580.5,217.7 581.7,219.6 579.4,221.9 583.3,222.6 584.5,223.8 581.0,224.5 578.2,227.8ZM576.8,220.0 577.3,215.4 577.5,213.0 578.7,211.0 576.3,208.1 574.0,207.7 571.7,209.8 571.7,211.8 568.1,212.2 568.6,216.1 569.3,218.5 567.4,221.1 569.3,222.6 572.8,221.9 576.3,220.4ZM611.6,257.0 613.0,257.0 613.7,254.5 613.5,252.0 611.6,253.2ZM611.1,264.3 612.5,264.6 614.2,263.4 614.4,258.3 613.0,257.3 610.6,258.6 611.3,261.9ZM620.5,267.3 623.0,266.7 627.9,266.4 626.8,271.2 625.1,270.9 620.7,268.5ZM646.4,274.3 652.9,275.2 652.2,276.1 646.6,275.5ZM666.9,276.6 668.6,274.9 672.3,274.0 670.9,276.3 668.6,277.2ZM56.5,278.9 59.5,279.2 62.6,277.8 66.1,277.2 66.5,279.4 68.4,280.3 70.5,278.0 74.2,276.9 75.9,275.5 77.7,276.1 79.8,274.0 79.4,270.9 80.1,266.4 82.2,264.3 82.4,261.3 81.2,257.0 78.9,257.6 77.7,259.8 77.5,263.7 76.6,266.4 74.2,268.8 71.4,270.9 70.3,269.4 68.4,273.2 67.2,274.3 63.7,274.6 60.2,274.9 57.9,277.2 56.5,278.0ZM897.2,278.9 900.2,279.2 903.3,277.8 906.8,277.2 907.2,279.4 909.1,280.3 911.2,278.0 914.9,276.9 916.6,275.5 918.4,276.1 920.5,274.0 920.1,270.9 920.8,266.4 922.9,264.3 923.1,261.3 921.9,257.0 919.6,257.6 918.4,259.8 918.2,263.7 917.3,266.4 914.9,268.8 912.1,270.9 911.0,269.4 909.1,273.2 907.9,274.3 904.4,274.6 900.9,274.9 898.6,277.2 897.2,278.0ZM77.7,256.7 80.5,255.8 81.2,253.2 85.5,255.1 88.3,252.0 91.3,251.0 88.3,248.7 83.6,245.5 82.2,243.8 81.2,247.1 81.2,250.4 78.4,251.0 77.7,253.6ZM918.4,256.7 921.2,255.8 921.9,253.2 926.1,255.1 928.9,252.0 932.0,251.0 928.9,248.7 924.3,245.5 922.9,243.8 921.9,247.1 921.9,250.4 919.1,251.0 918.4,253.6ZM53.7,280.3 56.7,279.2 59.1,281.7 57.9,285.8 56.7,287.2 54.9,286.6 54.4,284.5 53.9,282.5ZM894.4,280.3 897.4,279.2 899.8,281.7 898.6,285.8 897.4,287.2 895.5,286.6 895.1,284.5 894.6,282.5ZM60.2,281.7 62.6,278.0 65.4,278.3 64.2,280.8 61.4,282.2ZM900.9,281.7 903.3,278.0 906.1,278.3 904.9,280.8 902.1,282.2ZM82.4,242.1 85.9,240.5 84.8,237.0 85.2,231.8 88.3,231.8 85.9,224.5 85.5,218.8 84.3,211.8 82.9,213.0 83.6,220.7 82.4,226.3 82.4,235.3 81.9,240.5ZM923.1,242.1 926.6,240.5 925.4,237.0 925.9,231.8 928.9,231.8 926.6,224.5 926.1,218.8 925.0,211.8 923.6,213.0 924.3,220.7 923.1,226.3 923.1,235.3 922.6,240.5ZM31.3,308.2 32.2,304.4 34.5,302.3 35.7,303.1 34.5,306.9 33.1,311.0 31.7,309.5ZM872.0,308.2 872.9,304.4 875.2,302.3 876.4,303.1 875.2,306.9 873.8,311.0 872.4,309.5ZM4.4,317.7 7.7,315.5 10.0,316.7 8.9,319.2 6.5,320.2 4.7,319.4ZM845.1,317.7 848.4,315.5 850.7,316.7 849.5,319.2 847.2,320.2 845.3,319.4ZM31.0,325.5 32.4,319.4 36.2,319.4 36.9,323.1 34.8,326.0 35.2,329.9 40.4,330.9 40.8,334.0 38.0,332.8 33.4,331.1 32.2,329.2 31.0,327.5ZM871.7,325.5 873.1,319.4 876.9,319.4 877.6,323.1 875.5,326.0 875.9,329.9 881.1,330.9 881.5,334.0 878.7,332.8 874.1,331.1 872.9,329.2 871.7,327.5ZM35.7,347.0 39.2,345.1 41.5,342.8 43.9,340.4 46.2,344.7 45.5,348.2 43.4,349.8 41.5,348.4 39.9,345.8 36.4,347.5ZM876.4,347.0 879.9,345.1 882.2,342.8 884.6,340.4 886.9,344.7 886.2,348.2 884.1,349.8 882.2,348.4 880.6,345.8 877.1,347.5ZM35.7,338.7 38.0,336.4 41.5,334.0 44.6,337.6 43.2,339.9 40.4,340.9 38.0,342.3 35.7,340.4ZM876.4,338.7 878.7,336.4 882.2,334.0 885.3,337.6 883.9,339.9 881.1,340.9 878.7,342.3 876.4,340.4ZM24.5,343.9 29.9,338.7 30.6,337.1 29.4,339.5 25.2,344.7ZM865.2,343.9 870.6,338.7 871.3,337.1 870.1,339.5 865.9,344.7ZM5.4,359.9 6.5,364.6 8.2,369.2 9.6,370.4 14.7,370.9 18.2,372.3 21.7,372.3 22.4,368.1 23.6,365.7 25.2,362.2 28.2,361.1 25.9,359.2 26.4,355.2 27.5,352.9 29.2,351.2 26.4,349.4 24.7,347.2 22.9,348.2 20.5,351.2 19.4,351.9 17.0,353.6 14.7,355.9 11.2,357.6 10.0,359.9 7.7,359.4 6.1,358.7ZM846.0,359.9 847.2,364.6 848.8,369.2 850.2,370.4 855.4,370.9 858.9,372.3 862.4,372.3 863.1,368.1 864.3,365.7 865.9,362.2 868.9,361.1 866.6,359.2 867.1,355.2 868.2,352.9 869.9,351.2 867.1,349.4 865.4,347.2 863.6,348.2 861.2,351.2 860.1,351.9 857.7,353.6 855.4,355.9 851.9,357.6 850.7,359.9 848.4,359.4 846.7,358.7ZM-26.6,350.3 -21.5,351.2 -19.2,354.3 -15.7,357.6 -13.3,359.2 -9.8,361.5 -7.5,364.6 -5.2,367.6 -1.7,370.4 -1.9,373.9 -2.1,377.0 -5.2,377.2 -8.7,374.6 -11.0,372.7 -13.3,369.2 -15.7,365.7 -18.0,362.2 -19.2,359.4 -21.5,357.6 -25.0,354.5 -26.9,351.7ZM814.0,350.3 819.2,351.2 821.5,354.3 825.0,357.6 827.4,359.2 830.9,361.5 833.2,364.6 835.5,367.6 839.0,370.4 838.8,373.9 838.6,377.0 835.5,377.2 832.0,374.6 829.7,372.7 827.4,369.2 825.0,365.7 822.7,362.2 821.5,359.4 819.2,357.6 815.7,354.5 813.8,351.7ZM-3.5,379.3 -1.2,377.4 1.8,377.4 4.2,378.6 8.9,379.3 11.2,378.8 14.2,379.6 18.2,381.4 18.0,383.8 12.4,382.9 8.9,382.4 4.2,381.7 -0.5,380.7 -2.8,379.6ZM837.2,379.3 839.5,377.4 842.5,377.4 844.9,378.6 849.5,379.3 851.9,378.8 854.9,379.6 858.9,381.4 858.7,383.8 853.0,382.9 849.5,382.4 844.9,381.7 840.2,380.7 837.9,379.6ZM19.4,382.9 22.9,382.6 28.7,382.9 32.2,382.9 36.9,382.9 38.5,383.1 42.7,382.6 47.9,383.1 42.7,385.2 40.4,387.3 38.7,387.6 36.9,384.5 31.0,384.3 27.5,384.0 22.9,384.3 19.4,384.0ZM860.1,382.9 863.6,382.6 869.4,382.9 872.9,382.9 877.6,382.9 879.2,383.1 883.4,382.6 888.5,383.1 883.4,385.2 881.1,387.3 879.4,387.6 877.6,384.5 871.7,384.3 868.2,384.0 863.6,384.3 860.1,384.0ZM29.9,376.3 29.6,371.6 28.2,369.9 29.9,366.9 30.6,363.4 31.5,361.5 34.5,361.1 38.0,361.3 41.5,360.6 43.2,359.7 41.5,362.2 38.0,362.5 33.4,362.2 31.5,364.1 33.4,365.7 36.9,365.3 39.0,365.5 35.7,367.6 34.5,369.2 36.4,371.6 38.5,374.4 36.9,375.8 34.5,373.9 33.1,371.6 32.2,375.1 32.0,376.5ZM870.6,376.3 870.3,371.6 868.9,369.9 870.6,366.9 871.3,363.4 872.2,361.5 875.2,361.1 878.7,361.3 882.2,360.6 883.9,359.7 882.2,362.2 878.7,362.5 874.1,362.2 872.2,364.1 874.1,365.7 877.6,365.3 879.7,365.5 876.4,367.6 875.2,369.2 877.1,371.6 879.2,374.4 877.6,375.8 875.2,373.9 873.8,371.6 872.9,375.1 872.7,376.5ZM48.6,359.2 50.9,359.9 49.7,362.2 50.9,364.6 49.3,364.6 48.6,361.5ZM889.2,359.2 891.6,359.9 890.4,362.2 891.6,364.6 889.9,364.6 889.2,361.5ZM49.3,371.1 55.6,370.4 56.3,372.0 50.9,371.8ZM889.9,371.1 896.3,370.4 897.0,372.0 891.6,371.8ZM56.7,366.2 60.2,364.3 63.7,365.5 66.1,370.9 69.6,368.5 73.1,367.4 77.7,369.0 80.1,369.5 85.9,371.6 89.4,373.9 91.3,376.3 95.3,378.1 96.0,381.0 97.6,383.3 99.9,385.7 103.0,387.6 99.9,387.8 95.3,386.9 92.9,384.5 90.6,382.1 87.1,381.4 85.9,383.3 83.6,385.0 80.1,384.7 76.6,382.6 74.2,382.9 73.1,380.3 72.6,376.3 68.4,374.2 64.9,372.5 61.4,372.7 59.1,370.9 60.9,369.0 59.1,368.5 56.7,366.9ZM897.4,366.2 900.9,364.3 904.4,365.5 906.8,370.9 910.3,368.5 913.8,367.4 918.4,369.0 920.8,369.5 926.6,371.6 930.1,373.9 932.0,376.3 935.9,378.1 936.7,381.0 938.3,383.3 940.6,385.7 943.7,387.6 940.6,387.8 935.9,386.9 933.6,384.5 931.3,382.1 927.8,381.4 926.6,383.3 924.3,385.0 920.8,384.7 917.3,382.6 914.9,382.9 913.8,380.3 913.3,376.3 909.1,374.2 905.6,372.5 902.1,372.7 899.8,370.9 901.6,369.0 899.8,368.5 897.4,366.9ZM97.6,376.3 102.3,375.1 105.8,373.2 106.9,375.1 103.4,377.4 99.9,377.9ZM938.3,376.3 943.0,375.1 946.5,373.2 947.6,375.1 944.1,377.4 940.6,377.9ZM83.6,388.5 85.2,392.8 85.9,396.4 88.3,397.1 90.1,398.8 90.6,402.5 91.8,404.9 92.5,408.6 95.3,409.8 98.3,412.3 99.9,416.8 103.0,417.9 104.1,421.2 107.6,424.5 108.6,427.6 109.3,431.6 109.5,434.2 108.1,439.6 106.9,443.7 104.1,447.6 103.0,450.7 101.1,455.1 100.9,458.0 96.4,458.9 94.1,460.7 92.5,462.5 89.9,461.0 88.3,460.4 85.9,461.9 81.2,460.7 78.9,459.5 77.0,457.1 76.6,453.6 73.5,452.5 74.2,449.3 73.1,446.5 72.6,444.6 71.9,447.4 70.7,450.2 68.4,450.7 67.2,449.6 66.5,447.9 64.2,444.6 60.2,442.3 56.7,441.0 52.1,441.5 47.4,443.2 42.7,444.6 40.4,446.5 39.2,447.6 34.5,447.6 29.9,448.5 26.4,450.7 22.9,450.7 19.4,448.8 19.6,446.5 21.0,443.7 21.0,441.0 19.4,436.9 19.1,434.2 17.5,430.2 15.9,427.6 15.9,423.7 16.6,419.9 17.0,416.1 20.5,414.8 23.3,412.6 27.8,411.8 31.0,409.8 34.5,407.4 36.4,404.9 38.0,402.5 39.9,402.5 41.5,400.0 43.9,397.6 46.9,395.9 49.7,398.4 53.2,398.6 53.9,395.2 55.6,392.8 57.9,392.1 60.2,390.4 62.6,391.2 66.1,391.9 69.6,391.4 70.5,392.3 68.4,394.7 67.2,398.8 69.6,400.5 73.1,403.2 76.6,404.9 79.6,404.9 81.2,401.3 81.5,396.4 81.5,392.8 82.4,389.2ZM924.3,388.5 925.9,392.8 926.6,396.4 928.9,397.1 930.8,398.8 931.3,402.5 932.4,404.9 933.1,408.6 935.9,409.8 939.0,412.3 940.6,416.8 943.7,417.9 944.8,421.2 948.3,424.5 949.3,427.6 950.0,431.6 950.2,434.2 948.8,439.6 947.6,443.7 944.8,447.6 943.7,450.7 941.8,455.1 941.6,458.0 937.1,458.9 934.8,460.7 933.1,462.5 930.6,461.0 928.9,460.4 926.6,461.9 921.9,460.7 919.6,459.5 917.7,457.1 917.3,453.6 914.2,452.5 914.9,449.3 913.8,446.5 913.3,444.6 912.6,447.4 911.4,450.2 909.1,450.7 907.9,449.6 907.2,447.9 904.9,444.6 900.9,442.3 897.4,441.0 892.7,441.5 888.1,443.2 883.4,444.6 881.1,446.5 879.9,447.6 875.2,447.6 870.6,448.5 867.1,450.7 863.6,450.7 860.1,448.8 860.3,446.5 861.7,443.7 861.7,441.0 860.1,436.9 859.8,434.2 858.2,430.2 856.6,427.6 856.6,423.7 857.3,419.9 857.7,416.1 861.2,414.8 864.0,412.6 868.5,411.8 871.7,409.8 875.2,407.4 877.1,404.9 878.7,402.5 880.6,402.5 882.2,400.0 884.6,397.6 887.6,395.9 890.4,398.4 893.9,398.6 894.6,395.2 896.3,392.8 898.6,392.1 900.9,390.4 903.3,391.2 906.8,391.9 910.3,391.4 911.2,392.3 909.1,394.7 907.9,398.8 910.3,400.5 913.8,403.2 917.3,404.9 920.3,404.9 921.9,401.3 922.2,396.4 922.2,392.8 923.1,389.2ZM88.5,467.6 92.9,468.9 97.1,468.2 97.1,472.3 96.2,475.5 93.6,476.8 91.3,475.8 89.9,472.3 88.7,470.1ZM929.2,467.6 933.6,468.9 937.8,468.2 937.8,472.3 936.9,475.5 934.3,476.8 932.0,475.8 930.6,472.3 929.4,470.1ZM154.1,449.0 156.0,450.7 158.1,453.0 159.0,455.9 160.6,455.4 161.6,458.0 164.1,459.5 167.7,458.6 166.5,462.5 164.1,463.4 163.7,466.1 161.8,468.5 159.9,470.4 158.5,469.2 159.5,466.7 158.5,464.9 156.7,463.4 158.5,461.3 158.5,458.0 157.1,455.1 154.8,452.2ZM994.8,449.0 996.7,450.7 998.8,453.0 999.7,455.9 1001.3,455.4 1002.3,458.0 1004.8,459.5 1008.3,458.6 1007.2,462.5 1004.8,463.4 1004.4,466.1 1002.5,468.5 1000.6,470.4 999.2,469.2 1000.2,466.7 999.2,464.9 997.4,463.4 999.2,461.3 999.2,458.0 997.8,455.1 995.5,452.2ZM153.9,467.0 155.3,468.5 157.8,469.8 156.7,472.6 154.8,474.8 154.3,477.4 150.8,479.4 149.7,484.0 146.6,486.7 143.8,486.7 139.6,484.7 140.3,482.3 143.1,478.7 146.6,476.4 149.7,474.2 151.3,471.0 152.5,468.2ZM994.6,467.0 996.0,468.5 998.5,469.8 997.4,472.6 995.5,474.8 995.0,477.4 991.5,479.4 990.4,484.0 987.3,486.7 984.5,486.7 980.3,484.7 981.0,482.3 983.8,478.7 987.3,476.4 990.4,474.2 992.0,471.0 993.2,468.2ZM706.6,391.6 708.3,395.2 709.4,400.0 707.8,403.7 706.6,407.4 704.8,412.3 703.1,417.3 701.3,423.7 697.8,425.3 695.4,424.2 693.6,419.9 692.8,416.1 694.3,411.1 694.7,406.1 694.3,403.7 695.4,401.7 698.9,400.8 701.3,398.8 702.4,396.4 704.3,395.2 705.9,392.3ZM778.1,340.4 779.5,340.9 781.4,343.5 782.8,345.8 782.3,348.2 779.7,349.6 778.3,348.2 777.9,344.7ZM448.3,503.4 456.1,503.0 456.8,505.3 453.7,507.2 449.0,506.1ZM502.8,513.8 507.4,514.6 507.9,517.0 503.9,515.8ZM227.2,315.2 229.5,316.5 230.0,317.2 227.9,318.4 227.0,316.7ZM1067.9,315.2 1070.2,316.5 1070.7,317.2 1068.6,318.4 1067.7,316.7ZM225.6,313.2 227.2,313.5 226.3,314.2ZM1066.3,313.2 1067.9,313.5 1067.0,314.2ZM221.8,311.7 223.2,312.0 222.5,312.7ZM1062.5,311.7 1063.9,312.0 1063.2,312.7ZM133.8,411.6 136.1,412.6 140.8,416.6 139.6,417.1 135.0,413.6ZM974.5,411.6 976.8,412.6 981.5,416.6 980.3,417.1 975.6,413.6ZM140.8,398.8 142.7,399.3 144.3,402.5 143.8,405.7 142.0,401.7ZM981.5,398.8 983.4,399.3 985.0,402.5 984.5,405.7 982.7,401.7ZM116.3,379.3 119.8,381.0 125.6,383.3 129.1,388.1 126.8,386.9 122.1,384.5 117.4,382.1ZM957.0,379.3 960.5,381.0 966.3,383.3 969.8,388.1 967.5,386.9 962.8,384.5 958.1,382.1ZM164.8,404.9 167.7,404.4 167.9,406.6 165.3,406.6ZM1005.5,404.9 1008.3,404.4 1008.6,406.6 1006.0,406.6ZM111.8,375.6 113.9,377.4 114.9,379.3 113.2,378.6ZM952.5,375.6 954.6,377.4 955.6,379.3 953.9,378.6ZM102.3,369.2 106.9,371.6 108.1,373.9 104.6,371.6ZM943.0,369.2 947.6,371.6 948.8,373.9 945.3,371.6ZM40.4,386.9 43.9,384.5 48.1,383.1 46.2,384.5 41.5,387.3ZM881.1,386.9 884.6,384.5 888.8,383.1 886.9,384.5 882.2,387.3Z" fill="#f2efe9"/></g></svg></div>
<!-- converter -->
<div class="abs" style="left:892px;top:110px;width:300px;height:26px;background:rgba(255,255,255,0.78);border-radius:12px 12px 0 0"></div>
<svg class="abs" style="left:896.5px;top:116.5px" width="13" height="13" viewBox="0 0 24 24"><path fill="#666" d="M12 4V1L8 5l4 4V6c3.31 0 6 2.69 6 6 0 1.01-.25 1.97-.7 2.8l1.46 1.46C19.54 15.03 20 13.57 20 12c0-4.42-3.58-8-8-8zm0 14c-3.31 0-6-2.69-6-6 0-1.01.25-1.970.7-2.8L5.24 7.74C4.46 8.97 4 10.43 4 12c0 4.42 3.58 8 8 8v3l4-4-4-4v3z"/></svg>
<div class="t" style="left:912px;top:117px;font-size:12.5px;color:#3b5670">Converter</div>
<div class="abs" style="left:976.3px;top:112.7px;width:18px;height:18px;border-radius:50%;background:#ea1a1a"></div>
<div class="abs" style="left:980.5px;top:119px;width:9.5px;height:6.5px;border-radius:2px;background:#fff"></div>
<svg class="abs" style="left:983.8px;top:120.2px" width="4" height="4.2" viewBox="0 0 4 4.2"><path d="M0 0L4 2.1 0 4.2z" fill="#ea1a1a"/></svg>
<div class="t" style="left:1036.4px;top:118px;font-size:10px;color:#5a5a5a;letter-spacing:0.02px">Conversion Left - 2 GB</div>
<svg class="abs" style="left:1147.5px;top:118px" width="14" height="9" viewBox="0 0 14 9"><path d="M1.5 7.5L7 2l5.5 5.5" fill="none" stroke="#222" stroke-width="2"/></svg>
<svg class="abs" style="left:1170.5px;top:116.5px" width="12.5" height="12" viewBox="0 0 12 12"><path d="M1 1L11 11M11 1L1 11" fill="none" stroke="#222" stroke-width="1.7"/></svg>
<div class="abs" style="left:892px;top:136px;width:294px;height:30px;background:#efefef"></div>
<div class="abs" style="left:900.7px;top:141px;width:19.5px;height:19.5px;border-radius:50%;background:#0e3761"></div>
<div class="t" style="left:906.5px;top:145px;font-size:12px;color:#fff">2</div>
<div class="t" style="left:930.4px;top:145.3px;font-size:11px;color:#454545">Select Output Format</div>
<div class="abs" style="left:892px;top:166px;width:294px;height:386px;background:#fff"></div>
<div class="abs" style="left:1186px;top:186px;width:7px;height:369px;border-radius:4px;background:#0d3766"></div>
<div class="abs" style="left:909px;top:177px;width:265px;height:359px;background:#f3f3f3;border-radius:8px;box-shadow:0 1px 3px rgba(0,0,0,0.22)"></div>
<div class="t" style="left:1017.5px;top:189.3px;font-size:11.4px;color:#34485a;letter-spacing:0.9px;-webkit-text-stroke:0.5px #34485a">Input File</div>
<div class="abs" style="left:922.5px;top:215.5px;width:242px;height:113px;border:1px solid #eaeaea;border-radius:4px;background:#f4f4f4"></div>
<div class="abs" style="left:926.5px;top:223px;width:233px;height:25px;border:1px solid #e9e9e9;border-radius:3px;background:#f7f7f7"></div>
<div class="t" style="left:931.4px;top:229.5px;font-size:11px;color:#333;letter-spacing:-0.08px">swaziland_administrative_boundaries_provi...</div>
<div class="abs" style="left:926.5px;top:253.4px;width:233px;height:25px;border:1px solid #e9e9e9;border-radius:3px;background:#f6f6f6"></div>
<div class="t" style="left:931px;top:262px;font-family:'Liberation Serif',serif;font-size:9px;color:#8a8a8a;letter-spacing:0.5px">4326</div>
<div class="t" style="left:1006px;top:298px;font-size:11px;color:#333;letter-spacing:0.9px;text-decoration:underline">CRS</div>
<div class="abs" style="left:1041.5px;top:283px;width:40px;height:40px;border-radius:50%;background:#fff;border:1px solid #e6e6e6"></div>
<svg class="abs" style="left:1052.5px;top:295px" width="18" height="18" viewBox="0 0 24 24"><path fill="#333" d="M5 15H3v4c0 1.1.9 2 2 2h4v-2H5v-4zM5 5h4V3H5c-1.1 0-2 .9-2 2v4h2V5zm14-2h-4v2h4v4h2V5c0-1.1-.9-2-2-2zm0 16h-4v2h4c1.1 0 2-.9 2-2v-4h-2v4z"/><circle cx="12" cy="12" r="2.6" fill="none" stroke="#333" stroke-width="2"/></svg>
<div class="abs" style="left:922.3px;top:332.7px;width:250.7px;height:135px;background:#fff;border-radius:6px"></div>
<div class="t" style="left:1015.3px;top:347.8px;font-size:11.4px;color:#34485a;letter-spacing:0.75px;-webkit-text-stroke:0.5px #34485a">Output File</div>
<div class="abs" style="left:930.6px;top:372.3px;width:233.7px;height:32.7px;border:1px solid #bdbdbd;border-radius:4px"></div>
<div class="abs" style="left:940px;top:370px;width:66px;height:5px;background:#fff"></div>
<div class="t" style="left:943.7px;top:367.5px;font-size:10px;color:#777">Convert To *</div>
<div class="t" style="left:943.7px;top:382.5px;font-size:13px;color:#333">DXF</div>
<svg class="abs" style="left:1142.6px;top:386px" width="8.5" height="4.5" viewBox="0 0 8.5 4.5"><path d="M0 0h8.5L4.25 4.5z" fill="#555"/></svg>
<div class="t" style="left:934.7px;top:418.5px;font-size:11px;color:#333;letter-spacing:1.35px;text-decoration:underline">Output CRS</div>
<div class="t" style="left:930.6px;top:447.5px;font-family:'Liberation Serif',serif;font-size:9px;color:#8a8a8a;letter-spacing:0.5px">4326</div>
<div class="abs" style="left:957.2px;top:485.8px;width:100.8px;height:28.4px;border-radius:9px;background:#fbbd3f"></div>
<div class="t" style="left:970.3px;top:494.8px;font-size:11.5px;color:#fff;letter-spacing:1.1px;-webkit-text-stroke:0.45px #fff">Convert File</div>
<div class="abs" style="left:1068px;top:485.8px;width:70px;height:28.4px;border-radius:9px;background:#f65252"></div>
<div class="t" style="left:1081.3px;top:494.8px;font-size:11.5px;color:#fff;letter-spacing:1.45px;-webkit-text-stroke:0.45px #fff">Cancel</div>
<svg class="abs" style="left:1009px;top:496px" width="13" height="18" viewBox="0 0 13 18"><path d="M3.5 1.2c.8 0 1.4.6 1.4 1.4v6.2l.6-.1V6.8c0-.7.6-1.2 1.3-1.2s1.3.5 1.3 1.2v1.5l.5.1V7.6c0-.7.6-1.2 1.2-1.2s1.2.5 1.2 1.2v1.2l.4.1c.6 0 1.1.6 1.1 1.2v3.5c0 2.3-1.6 4.1-3.8 4.1H7.4c-1.2 0-2.2-.5-3-1.4L1 12.1c-.5-.6-.3-1.3.3-1.6.5-.3 1.1-.1 1.5.3l.6.7V2.6c0-.8.4-1.4 1.1-1.4z" fill="#fff" stroke="#222" stroke-width="0.9"/></svg>
<div class="abs" style="left:892px;top:551.7px;width:293px;height:15.3px;background:#e8f3e1;overflow:hidden">
  <div class="abs" style="left:8px;top:6px;width:19.5px;height:19.5px;border-radius:50%;background:#686868"></div><div class="t" style="left:14.3px;top:10px;font-size:11.5px;font-weight:bold;color:#fff">3</div>
  <div class="t" style="left:38px;top:10px;font-size:11px;color:#777">Download &amp; Publish</div>
</div>
<div class="abs" style="left:1131.5px;top:553.5px;width:49px;height:49px;border-radius:50%;background:#12a54f"></div>
<svg class="abs" style="left:1140px;top:562px" width="32" height="32" viewBox="0 0 32 32"><ellipse cx="15.7" cy="14.6" rx="10.8" ry="10.6" fill="#fff"/><path d="M10.2 21L11.4 28.6 17.5 24.6z" fill="#fff"/><path d="M14.6 20.2h7.8a3.9 3 0 0 1 -7.8 0z" fill="#12a54f"/></svg>
<div class="abs" style="left:1164.6px;top:553.5px;width:16.3px;height:16.3px;border-radius:50%;background:#c7161c"></div>
<div class="t" style="left:1169.8px;top:557px;font-size:9.5px;font-weight:bold;color:#fff">1</div>
<div class="abs" style="left:1044.5px;top:595.6px;width:80px;height:18.4px;border-radius:9px 9px 0 0;background:#fff"></div>
<div class="abs" style="left:1050px;top:598.5px;width:13px;height:13px;border-radius:50%;background:#111"></div>
<div class="t" style="left:1054.8px;top:600.2px;font-size:9.5px;font-weight:bold;color:#fff">i</div>
<div class="t" style="left:1063.5px;top:599px;font-size:12.2px;color:#333">Attribution</div>

</body></html>
